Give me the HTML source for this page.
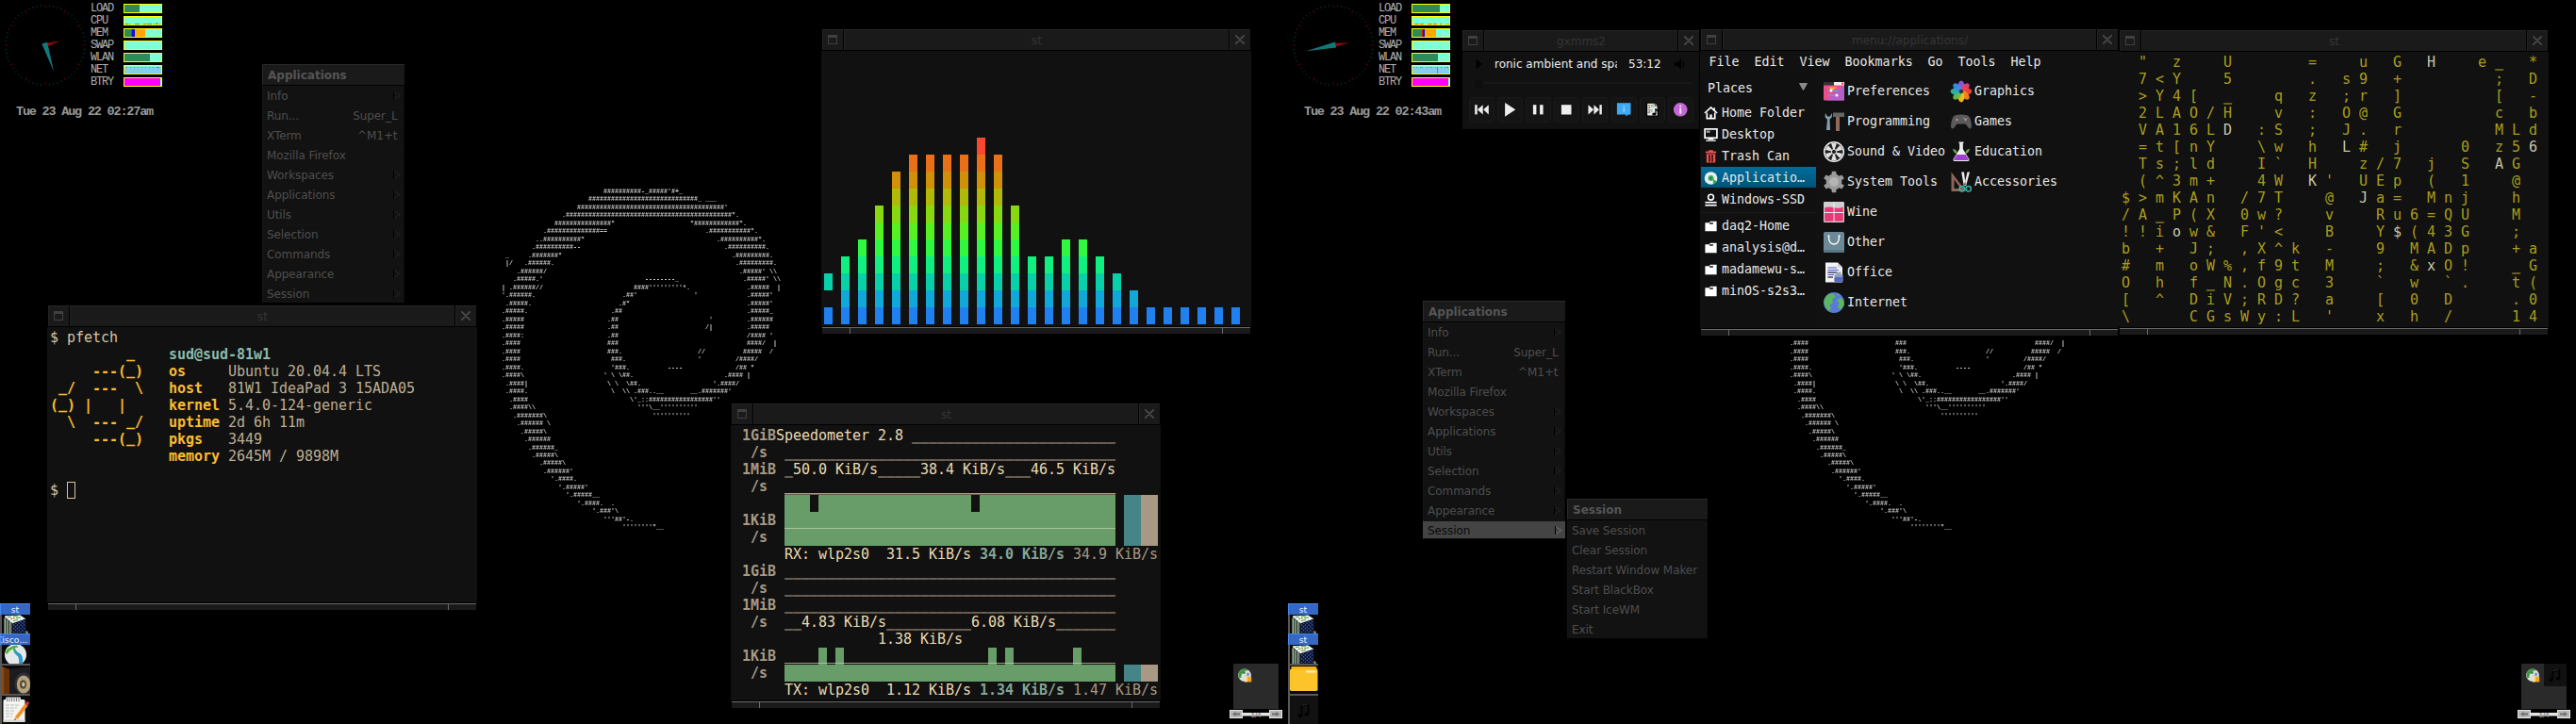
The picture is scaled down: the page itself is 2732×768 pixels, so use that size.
<!DOCTYPE html>
<html><head><meta charset="utf-8"><title>desktop</title>
<style>
html,body{margin:0;padding:0;background:#000;}
body{width:2732px;height:768px;position:relative;overflow:hidden;font-family:"DejaVu Sans","Liberation Sans",sans-serif;}
*{box-sizing:border-box;}
.abs{position:absolute;}
pre{margin:0;}
.art{position:absolute;font-family:"Liberation Mono","DejaVu Sans Mono",monospace;font-size:26.664px;line-height:33.96px;color:#cccccc;letter-spacing:0px;white-space:pre;font-weight:bold;transform:scale(0.25);transform-origin:0 0;filter:blur(0.3px);}
.lbl{position:absolute;font-family:"Liberation Mono",monospace;font-size:12px;letter-spacing:-1.2px;color:#b0b0b0;line-height:12px;white-space:pre;}
.date{position:absolute;font-family:"Liberation Mono",monospace;font-weight:bold;font-size:13.5px;letter-spacing:-1.2px;color:#999;line-height:14px;white-space:pre;}
.bar{position:absolute;width:41px;height:10px;border:1px solid #ffff00;background:#7fffd4;overflow:hidden;}
.bar i{position:absolute;top:0;height:8px;display:block;}
.menu{position:absolute;width:150px;font-size:12px;}
.menu .mt{height:22px;background:#1a1a1a;border-top:1px solid #2a2a2a;border-left:1px solid #2a2a2a;color:#555;font-weight:bold;padding:0 0 0 5px;line-height:22px;}
.menu .mi{height:21px;background:#121212;border-top:1px solid #131313;border-left:1px solid #161616;border-right:1px solid #0b0b0b;letter-spacing:-0.08px;color:#4e4e4e;line-height:20px;padding-left:4px;position:relative;white-space:nowrap;}
.menu .mi.sel{background:#444;color:#0a0a0a;border-top:1px solid #121212;border-left:1px solid #444;border-bottom:2px solid #0a0a0a;border-right:none;line-height:20px;}
.menu .mi:last-child{height:20px;}
.menu .mi.sel:last-child{height:20px;border-bottom-width:1px;}
.menu .mi span{position:absolute;right:6px;top:0px;}
.menu .mi svg{position:absolute;right:2.5px;top:4.7px;}
.menu .gap{height:1px;background:#000;}
.win{position:absolute;}
.tb{position:absolute;left:0;top:0;height:22px;width:100%;}
.tb div{position:absolute;top:0;height:22px;background:#1a1a1a;border-top:1px solid #272727;border-left:1px solid #232323;}
.tb .t{left:23px;right:23px;text-align:center;color:#353535;font-size:12px;line-height:23px;}
.tb .l{left:0;width:22px;}
.tb .r{right:0;width:22px;}
.tb svg{position:absolute;left:5px;top:5px;}
.ct{position:absolute;left:-1px;top:23px;background:#111;overflow:hidden;}
.rz{position:absolute;left:0;height:7px;background:#1a1a1a;border-top:1px solid #6a6a6a;}
.rz i{position:absolute;top:0;width:1px;height:6px;background:#6a6a6a;}
.term{position:absolute;left:2px;top:2.1px;font-family:"DejaVu Sans Mono","Liberation Mono",monospace;font-size:15px;line-height:18px;letter-spacing:-0.0308px;white-space:pre;color:#d5c4a1;}
.term b{font-weight:bold;}
.v{color:#bdae93}
.term u{text-decoration:none;position:relative;top:-0.4px;text-shadow:0 -0.7px 0 currentColor;}
.term b u{text-shadow:none;top:-0.8px;}
.cell{position:absolute;}
.fm{font-family:"DejaVu Sans Mono","Liberation Mono",monospace;font-size:13.3px;color:#e8e8e8;white-space:pre;}
.fm .x{position:absolute;line-height:16px;}
.tile{position:absolute;width:32px;height:32px;background:#0c0c0c;overflow:hidden;}
.tl{position:absolute;left:0;top:0;width:32px;height:12px;background:#3468c4;border-top:1px solid #4488ee;border-left:1px solid #4488ee;color:#eef2fc;font-size:9.4px;line-height:12px;white-space:nowrap;overflow:hidden;}
.tl span{position:absolute;left:-15px;width:60px;text-align:center;top:-0.3px;}
</style></head>
<body>
<pre class="art" style="left:527.80px;top:199.16px">                            ##########-_#####&#x27;#+_
                        #############################_ ___
                     #######################################&#x27;
                 .############################################&quot;.
               ###############&quot;                    &quot;############&quot;.
            .##############==                          .###########&quot;.
          ..##########&quot;                                   .##########&quot;.
         .##########--                                      .##########.
  _     .#######&quot;                                             .#########.
  |/   .######.                                                .#########.
     .######/                                                   .#####&#x27; \\
    .#####.&#x27;                           --------_                 .#####&#x27; \\
 | .######//                        ####&#x27;&#x27;&#x27;&#x27;&#x27;&#x27;&#x27;&#x27;&#x27;*.               .#####  |
 &#x27;.######.                       .##&#x27;               &#x27;             .#####&#x27;
  .#####.                       .#&quot;                               .#####&#x27;
 .#####.                      .##                                 .#####_
 .#####                      .##                        &#x27;         .######
 .#####                      .##                       /|         .#####
 .####:                      .##                                  /#### &#x27;
 .####                       ###                                  ####/  |
 .####                       ###.                    //          #####  /
 .####                        ###.                   &#x27;         /####/
 .####.                       &#x27;###.          ----              /## &quot;
 .####\                     &#x27; \ \##.                        .#### |
  .####|                     \ \  \##.                   &#x27;.####/
  .####.                      \  \\ .###..__       __.#######&#x27;
   .####                           \&#x27;_::#################&#x27;&#x27;
   .####\\                           &#x27;&#x27;&#x27;\__&#x27;&#x27;&#x27;&#x27;&#x27;&#x27;&#x27;&#x27;&#x27;&#x27;
    .#######\                            &#x27;&#x27;&#x27;&#x27;&#x27;&#x27;&#x27;&#x27;&#x27;&#x27;
     .###### \
      .#####\
       .######
        .######_
         .#####\
           .#####\
            .######&#x27;
              &#x27;.####.
                &#x27;.#####&#x27;
                  &#x27;.#####__
                     &#x27;.####.  .
                         &#x27;.###&#x27;\
                            &#x27;&#x27;&#x27;##&#x27;-.
                                 &#x27;&#x27;&#x27;&#x27;&#x27;&#x27;&#x27;&#x27;&quot;__</pre>
<pre class="art" style="left:1893.80px;top:199.16px"> 
 
 
 
 
 
 
 
 
 
 
 
 
 
 
 
 
 
 
 .####                       ###                                  ####/  |
 .####                       ###.                    //          #####  /
 .####                        ###.                   &#x27;         /####/
 .####.                       &#x27;###.          ----              /## &quot;
 .####\                     &#x27; \ \##.                        .#### |
  .####|                     \ \  \##.                   &#x27;.####/
  .####.                      \  \\ .###..__       __.#######&#x27;
   .####                           \&#x27;_::#################&#x27;&#x27;
   .####\\                           &#x27;&#x27;&#x27;\__&#x27;&#x27;&#x27;&#x27;&#x27;&#x27;&#x27;&#x27;&#x27;&#x27;
    .#######\                            &#x27;&#x27;&#x27;&#x27;&#x27;&#x27;&#x27;&#x27;&#x27;&#x27;
     .###### \
      .#####\
       .######
        .######_
         .#####\
           .#####\
            .######&#x27;
              &#x27;.####.
                &#x27;.#####&#x27;
                  &#x27;.#####__
                     &#x27;.####.  .
                         &#x27;.###&#x27;\
                            &#x27;&#x27;&#x27;##&#x27;-.
                                 &#x27;&#x27;&#x27;&#x27;&#x27;&#x27;&#x27;&#x27;&quot;__</pre>
<svg class="abs" style="left:0px;top:0" width="96" height="96" viewBox="0 0 96 96"><line x1="48.00" y1="8.80" x2="48.00" y2="5.00" stroke="#500000" stroke-width="1.1"/><line x1="52.29" y1="7.22" x2="52.49" y2="5.24" stroke="#003333" stroke-width="1.0"/><line x1="56.52" y1="7.90" x2="56.94" y2="5.94" stroke="#003333" stroke-width="1.0"/><line x1="60.67" y1="9.01" x2="61.29" y2="7.10" stroke="#003333" stroke-width="1.0"/><line x1="64.68" y1="10.54" x2="65.49" y2="8.72" stroke="#003333" stroke-width="1.0"/><line x1="67.60" y1="14.05" x2="69.50" y2="10.76" stroke="#500000" stroke-width="1.1"/><line x1="72.10" y1="14.83" x2="73.27" y2="13.21" stroke="#003333" stroke-width="1.0"/><line x1="75.43" y1="17.53" x2="76.77" y2="16.04" stroke="#003333" stroke-width="1.0"/><line x1="78.47" y1="20.57" x2="79.96" y2="19.23" stroke="#003333" stroke-width="1.0"/><line x1="81.17" y1="23.90" x2="82.79" y2="22.73" stroke="#003333" stroke-width="1.0"/><line x1="81.95" y1="28.40" x2="85.24" y2="26.50" stroke="#500000" stroke-width="1.1"/><line x1="85.46" y1="31.32" x2="87.28" y2="30.51" stroke="#003333" stroke-width="1.0"/><line x1="86.99" y1="35.33" x2="88.90" y2="34.71" stroke="#003333" stroke-width="1.0"/><line x1="88.10" y1="39.48" x2="90.06" y2="39.06" stroke="#003333" stroke-width="1.0"/><line x1="88.78" y1="43.71" x2="90.76" y2="43.51" stroke="#003333" stroke-width="1.0"/><line x1="87.20" y1="48.00" x2="91.00" y2="48.00" stroke="#500000" stroke-width="1.1"/><line x1="88.78" y1="52.29" x2="90.76" y2="52.49" stroke="#003333" stroke-width="1.0"/><line x1="88.10" y1="56.52" x2="90.06" y2="56.94" stroke="#003333" stroke-width="1.0"/><line x1="86.99" y1="60.67" x2="88.90" y2="61.29" stroke="#003333" stroke-width="1.0"/><line x1="85.46" y1="64.68" x2="87.28" y2="65.49" stroke="#003333" stroke-width="1.0"/><line x1="81.95" y1="67.60" x2="85.24" y2="69.50" stroke="#500000" stroke-width="1.1"/><line x1="81.17" y1="72.10" x2="82.79" y2="73.27" stroke="#003333" stroke-width="1.0"/><line x1="78.47" y1="75.43" x2="79.96" y2="76.77" stroke="#003333" stroke-width="1.0"/><line x1="75.43" y1="78.47" x2="76.77" y2="79.96" stroke="#003333" stroke-width="1.0"/><line x1="72.10" y1="81.17" x2="73.27" y2="82.79" stroke="#003333" stroke-width="1.0"/><line x1="67.60" y1="81.95" x2="69.50" y2="85.24" stroke="#500000" stroke-width="1.1"/><line x1="64.68" y1="85.46" x2="65.49" y2="87.28" stroke="#003333" stroke-width="1.0"/><line x1="60.67" y1="86.99" x2="61.29" y2="88.90" stroke="#003333" stroke-width="1.0"/><line x1="56.52" y1="88.10" x2="56.94" y2="90.06" stroke="#003333" stroke-width="1.0"/><line x1="52.29" y1="88.78" x2="52.49" y2="90.76" stroke="#003333" stroke-width="1.0"/><line x1="48.00" y1="87.20" x2="48.00" y2="91.00" stroke="#500000" stroke-width="1.1"/><line x1="43.71" y1="88.78" x2="43.51" y2="90.76" stroke="#003333" stroke-width="1.0"/><line x1="39.48" y1="88.10" x2="39.06" y2="90.06" stroke="#003333" stroke-width="1.0"/><line x1="35.33" y1="86.99" x2="34.71" y2="88.90" stroke="#003333" stroke-width="1.0"/><line x1="31.32" y1="85.46" x2="30.51" y2="87.28" stroke="#003333" stroke-width="1.0"/><line x1="28.40" y1="81.95" x2="26.50" y2="85.24" stroke="#500000" stroke-width="1.1"/><line x1="23.90" y1="81.17" x2="22.73" y2="82.79" stroke="#003333" stroke-width="1.0"/><line x1="20.57" y1="78.47" x2="19.23" y2="79.96" stroke="#003333" stroke-width="1.0"/><line x1="17.53" y1="75.43" x2="16.04" y2="76.77" stroke="#003333" stroke-width="1.0"/><line x1="14.83" y1="72.10" x2="13.21" y2="73.27" stroke="#003333" stroke-width="1.0"/><line x1="14.05" y1="67.60" x2="10.76" y2="69.50" stroke="#500000" stroke-width="1.1"/><line x1="10.54" y1="64.68" x2="8.72" y2="65.49" stroke="#003333" stroke-width="1.0"/><line x1="9.01" y1="60.67" x2="7.10" y2="61.29" stroke="#003333" stroke-width="1.0"/><line x1="7.90" y1="56.52" x2="5.94" y2="56.94" stroke="#003333" stroke-width="1.0"/><line x1="7.22" y1="52.29" x2="5.24" y2="52.49" stroke="#003333" stroke-width="1.0"/><line x1="8.80" y1="48.00" x2="5.00" y2="48.00" stroke="#500000" stroke-width="1.1"/><line x1="7.22" y1="43.71" x2="5.24" y2="43.51" stroke="#003333" stroke-width="1.0"/><line x1="7.90" y1="39.48" x2="5.94" y2="39.06" stroke="#003333" stroke-width="1.0"/><line x1="9.01" y1="35.33" x2="7.10" y2="34.71" stroke="#003333" stroke-width="1.0"/><line x1="10.54" y1="31.32" x2="8.72" y2="30.51" stroke="#003333" stroke-width="1.0"/><line x1="14.05" y1="28.40" x2="10.76" y2="26.50" stroke="#500000" stroke-width="1.1"/><line x1="14.83" y1="23.90" x2="13.21" y2="22.73" stroke="#003333" stroke-width="1.0"/><line x1="17.53" y1="20.57" x2="16.04" y2="19.23" stroke="#003333" stroke-width="1.0"/><line x1="20.57" y1="17.53" x2="19.23" y2="16.04" stroke="#003333" stroke-width="1.0"/><line x1="23.90" y1="14.83" x2="22.73" y2="13.21" stroke="#003333" stroke-width="1.0"/><line x1="28.40" y1="14.05" x2="26.50" y2="10.76" stroke="#500000" stroke-width="1.1"/><line x1="31.32" y1="10.54" x2="30.51" y2="8.72" stroke="#003333" stroke-width="1.0"/><line x1="35.33" y1="9.01" x2="34.71" y2="7.10" stroke="#003333" stroke-width="1.0"/><line x1="39.48" y1="7.90" x2="39.06" y2="5.94" stroke="#003333" stroke-width="1.0"/><line x1="43.71" y1="7.22" x2="43.51" y2="5.24" stroke="#003333" stroke-width="1.0"/><polygon points="46.79,50.97 64.30,43.17 45.37,46.17" fill="#8b0a0a"/><polygon points="44.37,46.55 57.12,76.06 50.08,44.70" fill="#11797c"/></svg>
<div class="lbl" style="left:96px;top:3.2px">LOAD</div><div class="bar" style="left:131px;top:4px"><i style="left:0px;width:16px;background:#2e8b57;"></i></div>
<div class="lbl" style="left:96px;top:16.2px">CPU</div><div class="bar" style="left:131px;top:17px"><i style="left:1px;width:1px;background:#3c9a5a;top:7px;height:1px"></i><i style="left:2px;width:1px;background:#3c9a5a;top:7px;height:1px"></i><i style="left:5px;width:1px;background:#3c9a5a;top:7px;height:1px"></i><i style="left:11px;width:1px;background:#3c9a5a;top:7px;height:1px"></i><i style="left:12px;width:1px;background:#3c9a5a;top:7px;height:1px"></i><i style="left:14px;width:1px;background:#3c9a5a;top:7px;height:1px"></i><i style="left:15px;width:1px;background:#3c9a5a;top:7px;height:1px"></i><i style="left:20px;width:1px;background:#3c9a5a;top:7px;height:1px"></i><i style="left:22px;width:1px;background:#3c9a5a;top:7px;height:1px"></i><i style="left:24px;width:1px;background:#3c9a5a;top:7px;height:1px"></i><i style="left:25px;width:1px;background:#3c9a5a;top:7px;height:1px"></i><i style="left:27px;width:1px;background:#3c9a5a;top:7px;height:1px"></i><i style="left:28px;width:1px;background:#3c9a5a;top:7px;height:1px"></i><i style="left:31px;width:1px;background:#3c9a5a;top:7px;height:1px"></i><i style="left:34px;width:1px;background:#3c9a5a;top:7px;height:1px"></i><i style="left:37px;width:1px;background:#3c9a5a;top:7px;height:1px"></i><i style="left:3px;width:1px;background:#d08a20;top:7px;height:1px"></i><i style="left:13px;width:1px;background:#d08a20;top:7px;height:1px"></i><i style="left:21px;width:1px;background:#d08a20;top:7px;height:1px"></i><i style="left:26px;width:1px;background:#d08a20;top:7px;height:1px"></i><i style="left:33px;width:1px;background:#d08a20;top:7px;height:1px"></i><i style="left:34px;width:1px;background:#2e8b57;top:6px;height:2px"></i></div>
<div class="lbl" style="left:96px;top:29.2px">MEM</div><div class="bar" style="left:131px;top:30px"><i style="left:0px;width:7px;background:#2e8b57;"></i><i style="left:7px;width:1px;background:#ee1111;"></i><i style="left:8px;width:2.5px;background:#0a0aee;"></i><i style="left:10.5px;width:11px;background:#ffa500;"></i></div>
<div class="lbl" style="left:96px;top:42.2px">SWAP</div><div class="bar" style="left:131px;top:43px"></div>
<div class="lbl" style="left:96px;top:55.2px">WLAN</div><div class="bar" style="left:131px;top:56px"><i style="left:0px;width:27px;background:#2e8b57;"></i></div>
<div class="lbl" style="left:96px;top:68.2px">NET</div><div class="bar" style="left:131px;top:69px"><i style="left:0px;width:39px;background:#87ceeb;top:1px;height:7px"></i><i style="left:2px;width:1px;background:#7b68ee;top:1px;height:1px"></i><i style="left:6px;width:1px;background:#7b68ee;top:1px;height:1px"></i><i style="left:10px;width:1px;background:#7b68ee;top:1px;height:1px"></i><i style="left:14px;width:1px;background:#7b68ee;top:1px;height:1px"></i><i style="left:18px;width:1px;background:#7b68ee;top:1px;height:1px"></i><i style="left:22px;width:1px;background:#7b68ee;top:1px;height:1px"></i><i style="left:26px;width:1px;background:#7b68ee;top:1px;height:1px"></i><i style="left:30px;width:1px;background:#7b68ee;top:1px;height:1px"></i><i style="left:34px;width:1px;background:#7b68ee;top:1px;height:1px"></i><i style="left:35px;width:1px;background:#7b68ee;top:1px;height:1px"></i><i style="left:36px;width:1px;background:#7b68ee;top:1px;height:1px"></i></div>
<div class="lbl" style="left:96px;top:81.2px">BTRY</div><div class="bar" style="left:131px;top:82px"><i style="left:0px;width:38px;background:#ff00ff;"></i></div>
<div class="date" style="left:17px;top:112px">Tue 23 Aug 22 02:27am</div>
<svg class="abs" style="left:1366px;top:0" width="96" height="96" viewBox="0 0 96 96"><line x1="48.00" y1="8.80" x2="48.00" y2="5.00" stroke="#500000" stroke-width="1.1"/><line x1="52.29" y1="7.22" x2="52.49" y2="5.24" stroke="#003333" stroke-width="1.0"/><line x1="56.52" y1="7.90" x2="56.94" y2="5.94" stroke="#003333" stroke-width="1.0"/><line x1="60.67" y1="9.01" x2="61.29" y2="7.10" stroke="#003333" stroke-width="1.0"/><line x1="64.68" y1="10.54" x2="65.49" y2="8.72" stroke="#003333" stroke-width="1.0"/><line x1="67.60" y1="14.05" x2="69.50" y2="10.76" stroke="#500000" stroke-width="1.1"/><line x1="72.10" y1="14.83" x2="73.27" y2="13.21" stroke="#003333" stroke-width="1.0"/><line x1="75.43" y1="17.53" x2="76.77" y2="16.04" stroke="#003333" stroke-width="1.0"/><line x1="78.47" y1="20.57" x2="79.96" y2="19.23" stroke="#003333" stroke-width="1.0"/><line x1="81.17" y1="23.90" x2="82.79" y2="22.73" stroke="#003333" stroke-width="1.0"/><line x1="81.95" y1="28.40" x2="85.24" y2="26.50" stroke="#500000" stroke-width="1.1"/><line x1="85.46" y1="31.32" x2="87.28" y2="30.51" stroke="#003333" stroke-width="1.0"/><line x1="86.99" y1="35.33" x2="88.90" y2="34.71" stroke="#003333" stroke-width="1.0"/><line x1="88.10" y1="39.48" x2="90.06" y2="39.06" stroke="#003333" stroke-width="1.0"/><line x1="88.78" y1="43.71" x2="90.76" y2="43.51" stroke="#003333" stroke-width="1.0"/><line x1="87.20" y1="48.00" x2="91.00" y2="48.00" stroke="#500000" stroke-width="1.1"/><line x1="88.78" y1="52.29" x2="90.76" y2="52.49" stroke="#003333" stroke-width="1.0"/><line x1="88.10" y1="56.52" x2="90.06" y2="56.94" stroke="#003333" stroke-width="1.0"/><line x1="86.99" y1="60.67" x2="88.90" y2="61.29" stroke="#003333" stroke-width="1.0"/><line x1="85.46" y1="64.68" x2="87.28" y2="65.49" stroke="#003333" stroke-width="1.0"/><line x1="81.95" y1="67.60" x2="85.24" y2="69.50" stroke="#500000" stroke-width="1.1"/><line x1="81.17" y1="72.10" x2="82.79" y2="73.27" stroke="#003333" stroke-width="1.0"/><line x1="78.47" y1="75.43" x2="79.96" y2="76.77" stroke="#003333" stroke-width="1.0"/><line x1="75.43" y1="78.47" x2="76.77" y2="79.96" stroke="#003333" stroke-width="1.0"/><line x1="72.10" y1="81.17" x2="73.27" y2="82.79" stroke="#003333" stroke-width="1.0"/><line x1="67.60" y1="81.95" x2="69.50" y2="85.24" stroke="#500000" stroke-width="1.1"/><line x1="64.68" y1="85.46" x2="65.49" y2="87.28" stroke="#003333" stroke-width="1.0"/><line x1="60.67" y1="86.99" x2="61.29" y2="88.90" stroke="#003333" stroke-width="1.0"/><line x1="56.52" y1="88.10" x2="56.94" y2="90.06" stroke="#003333" stroke-width="1.0"/><line x1="52.29" y1="88.78" x2="52.49" y2="90.76" stroke="#003333" stroke-width="1.0"/><line x1="48.00" y1="87.20" x2="48.00" y2="91.00" stroke="#500000" stroke-width="1.1"/><line x1="43.71" y1="88.78" x2="43.51" y2="90.76" stroke="#003333" stroke-width="1.0"/><line x1="39.48" y1="88.10" x2="39.06" y2="90.06" stroke="#003333" stroke-width="1.0"/><line x1="35.33" y1="86.99" x2="34.71" y2="88.90" stroke="#003333" stroke-width="1.0"/><line x1="31.32" y1="85.46" x2="30.51" y2="87.28" stroke="#003333" stroke-width="1.0"/><line x1="28.40" y1="81.95" x2="26.50" y2="85.24" stroke="#500000" stroke-width="1.1"/><line x1="23.90" y1="81.17" x2="22.73" y2="82.79" stroke="#003333" stroke-width="1.0"/><line x1="20.57" y1="78.47" x2="19.23" y2="79.96" stroke="#003333" stroke-width="1.0"/><line x1="17.53" y1="75.43" x2="16.04" y2="76.77" stroke="#003333" stroke-width="1.0"/><line x1="14.83" y1="72.10" x2="13.21" y2="73.27" stroke="#003333" stroke-width="1.0"/><line x1="14.05" y1="67.60" x2="10.76" y2="69.50" stroke="#500000" stroke-width="1.1"/><line x1="10.54" y1="64.68" x2="8.72" y2="65.49" stroke="#003333" stroke-width="1.0"/><line x1="9.01" y1="60.67" x2="7.10" y2="61.29" stroke="#003333" stroke-width="1.0"/><line x1="7.90" y1="56.52" x2="5.94" y2="56.94" stroke="#003333" stroke-width="1.0"/><line x1="7.22" y1="52.29" x2="5.24" y2="52.49" stroke="#003333" stroke-width="1.0"/><line x1="8.80" y1="48.00" x2="5.00" y2="48.00" stroke="#500000" stroke-width="1.1"/><line x1="7.22" y1="43.71" x2="5.24" y2="43.51" stroke="#003333" stroke-width="1.0"/><line x1="7.90" y1="39.48" x2="5.94" y2="39.06" stroke="#003333" stroke-width="1.0"/><line x1="9.01" y1="35.33" x2="7.10" y2="34.71" stroke="#003333" stroke-width="1.0"/><line x1="10.54" y1="31.32" x2="8.72" y2="30.51" stroke="#003333" stroke-width="1.0"/><line x1="14.05" y1="28.40" x2="10.76" y2="26.50" stroke="#500000" stroke-width="1.1"/><line x1="14.83" y1="23.90" x2="13.21" y2="22.73" stroke="#003333" stroke-width="1.0"/><line x1="17.53" y1="20.57" x2="16.04" y2="19.23" stroke="#003333" stroke-width="1.0"/><line x1="20.57" y1="17.53" x2="19.23" y2="16.04" stroke="#003333" stroke-width="1.0"/><line x1="23.90" y1="14.83" x2="22.73" y2="13.21" stroke="#003333" stroke-width="1.0"/><line x1="28.40" y1="14.05" x2="26.50" y2="10.76" stroke="#500000" stroke-width="1.1"/><line x1="31.32" y1="10.54" x2="30.51" y2="8.72" stroke="#003333" stroke-width="1.0"/><line x1="35.33" y1="9.01" x2="34.71" y2="7.10" stroke="#003333" stroke-width="1.0"/><line x1="39.48" y1="7.90" x2="39.06" y2="5.94" stroke="#003333" stroke-width="1.0"/><line x1="43.71" y1="7.22" x2="43.51" y2="5.24" stroke="#003333" stroke-width="1.0"/><polygon points="46.39,50.77 64.81,45.49 45.65,45.82" fill="#8b0a0a"/><polygon points="49.82,44.55 19.14,54.13 51.07,50.41" fill="#11797c"/></svg>
<div class="lbl" style="left:1462px;top:3.2px">LOAD</div><div class="bar" style="left:1497px;top:4px"><i style="left:0px;width:29px;background:#2e8b57;"></i></div>
<div class="lbl" style="left:1462px;top:16.2px">CPU</div><div class="bar" style="left:1497px;top:17px"><i style="left:2px;width:1px;background:#d08a20;top:7px;height:1px"></i><i style="left:3px;width:1px;background:#d08a20;top:7px;height:1px"></i><i style="left:5px;width:1px;background:#d08a20;top:7px;height:1px"></i><i style="left:6px;width:1px;background:#d08a20;top:7px;height:1px"></i><i style="left:8px;width:1px;background:#d08a20;top:7px;height:1px"></i><i style="left:10px;width:1px;background:#d08a20;top:7px;height:1px"></i><i style="left:11px;width:1px;background:#d08a20;top:7px;height:1px"></i><i style="left:16px;width:1px;background:#d08a20;top:7px;height:1px"></i><i style="left:17px;width:1px;background:#d08a20;top:7px;height:1px"></i><i style="left:19px;width:1px;background:#d08a20;top:7px;height:1px"></i><i style="left:20px;width:1px;background:#d08a20;top:7px;height:1px"></i><i style="left:22px;width:1px;background:#d08a20;top:7px;height:1px"></i><i style="left:23px;width:1px;background:#d08a20;top:7px;height:1px"></i><i style="left:25px;width:1px;background:#d08a20;top:7px;height:1px"></i><i style="left:29px;width:1px;background:#d08a20;top:7px;height:1px"></i><i style="left:35px;width:1px;background:#d08a20;top:7px;height:1px"></i><i style="left:37px;width:1px;background:#d08a20;top:7px;height:1px"></i><i style="left:38px;width:1px;background:#d08a20;top:7px;height:1px"></i><i style="left:4px;width:1px;background:#3c9a5a;top:7px;height:1px"></i><i style="left:9px;width:1px;background:#3c9a5a;top:7px;height:1px"></i><i style="left:18px;width:1px;background:#3c9a5a;top:7px;height:1px"></i><i style="left:24px;width:1px;background:#3c9a5a;top:7px;height:1px"></i><i style="left:30px;width:1px;background:#3c9a5a;top:7px;height:1px"></i></div>
<div class="lbl" style="left:1462px;top:29.2px">MEM</div><div class="bar" style="left:1497px;top:30px"><i style="left:0px;width:10px;background:#2e8b57;"></i><i style="left:10px;width:1px;background:#ee1111;"></i><i style="left:11px;width:2px;background:#0a0aee;"></i><i style="left:13px;width:12px;background:#ffa500;"></i></div>
<div class="lbl" style="left:1462px;top:42.2px">SWAP</div><div class="bar" style="left:1497px;top:43px"></div>
<div class="lbl" style="left:1462px;top:55.2px">WLAN</div><div class="bar" style="left:1497px;top:56px"><i style="left:0px;width:26.5px;background:#2e8b57;"></i></div>
<div class="lbl" style="left:1462px;top:68.2px">NET</div><div class="bar" style="left:1497px;top:69px"><i style="left:0px;width:39px;background:#87ceeb;top:1px;height:7px"></i><i style="left:1px;width:1px;background:#7b68ee;top:1px;height:1px"></i><i style="left:4px;width:1px;background:#7b68ee;top:1px;height:1px"></i><i style="left:8px;width:1px;background:#7b68ee;top:1px;height:1px"></i><i style="left:10px;width:1px;background:#7b68ee;top:1px;height:1px"></i><i style="left:15px;width:1px;background:#7b68ee;top:1px;height:1px"></i><i style="left:18px;width:1px;background:#7b68ee;top:1px;height:1px"></i><i style="left:20px;width:1px;background:#7b68ee;top:1px;height:1px"></i><i style="left:24px;width:1px;background:#7b68ee;top:1px;height:1px"></i><i style="left:30px;width:1px;background:#7b68ee;top:1px;height:1px"></i><i style="left:34px;width:1px;background:#7b68ee;top:1px;height:1px"></i><i style="left:36px;width:1px;background:#7b68ee;top:1px;height:1px"></i><i style="left:37px;width:1px;background:#7b68ee;top:1px;height:1px"></i><i style="left:26px;width:1px;background:#7b68ee;top:1px;height:7px"></i></div>
<div class="lbl" style="left:1462px;top:81.2px">BTRY</div><div class="bar" style="left:1497px;top:82px"><i style="left:0px;width:38px;background:#ff00ff;"></i></div>
<div class="date" style="left:1383px;top:112px">Tue 23 Aug 22 02:43am</div>
<div class="menu" style="left:278px;top:68px;width:150.5px"><div class="mt">Applications</div><div class="gap"></div><div class="mi">Info<svg width="8" height="9" viewBox="0 0 8 9"><path d="M0.5 0.5 L7.3 4.5 L0.5 8.5" fill="none" stroke="#242424" stroke-width="1"/><path d="M0.5 0 V9" stroke="#000" stroke-width="1"/></svg></div><div class="mi">Run...<span>Super_L</span></div><div class="mi">XTerm<span>^M1+t</span></div><div class="mi">Mozilla Firefox</div><div class="mi">Workspaces<svg width="8" height="9" viewBox="0 0 8 9"><path d="M0.5 0.5 L7.3 4.5 L0.5 8.5" fill="none" stroke="#242424" stroke-width="1"/><path d="M0.5 0 V9" stroke="#000" stroke-width="1"/></svg></div><div class="mi">Applications<svg width="8" height="9" viewBox="0 0 8 9"><path d="M0.5 0.5 L7.3 4.5 L0.5 8.5" fill="none" stroke="#242424" stroke-width="1"/><path d="M0.5 0 V9" stroke="#000" stroke-width="1"/></svg></div><div class="mi">Utils<svg width="8" height="9" viewBox="0 0 8 9"><path d="M0.5 0.5 L7.3 4.5 L0.5 8.5" fill="none" stroke="#242424" stroke-width="1"/><path d="M0.5 0 V9" stroke="#000" stroke-width="1"/></svg></div><div class="mi">Selection<svg width="8" height="9" viewBox="0 0 8 9"><path d="M0.5 0.5 L7.3 4.5 L0.5 8.5" fill="none" stroke="#242424" stroke-width="1"/><path d="M0.5 0 V9" stroke="#000" stroke-width="1"/></svg></div><div class="mi">Commands<svg width="8" height="9" viewBox="0 0 8 9"><path d="M0.5 0.5 L7.3 4.5 L0.5 8.5" fill="none" stroke="#242424" stroke-width="1"/><path d="M0.5 0 V9" stroke="#000" stroke-width="1"/></svg></div><div class="mi">Appearance<svg width="8" height="9" viewBox="0 0 8 9"><path d="M0.5 0.5 L7.3 4.5 L0.5 8.5" fill="none" stroke="#242424" stroke-width="1"/><path d="M0.5 0 V9" stroke="#000" stroke-width="1"/></svg></div><div class="mi">Session<svg width="8" height="9" viewBox="0 0 8 9"><path d="M0.5 0.5 L7.3 4.5 L0.5 8.5" fill="none" stroke="#242424" stroke-width="1"/><path d="M0.5 0 V9" stroke="#000" stroke-width="1"/></svg></div></div>
<div class="menu" style="left:1509px;top:319px;width:150.5px"><div class="mt">Applications</div><div class="gap"></div><div class="mi">Info<svg width="8" height="9" viewBox="0 0 8 9"><path d="M0.5 0.5 L7.3 4.5 L0.5 8.5" fill="none" stroke="#242424" stroke-width="1"/><path d="M0.5 0 V9" stroke="#000" stroke-width="1"/></svg></div><div class="mi">Run...<span>Super_L</span></div><div class="mi">XTerm<span>^M1+t</span></div><div class="mi">Mozilla Firefox</div><div class="mi">Workspaces<svg width="8" height="9" viewBox="0 0 8 9"><path d="M0.5 0.5 L7.3 4.5 L0.5 8.5" fill="none" stroke="#242424" stroke-width="1"/><path d="M0.5 0 V9" stroke="#000" stroke-width="1"/></svg></div><div class="mi">Applications<svg width="8" height="9" viewBox="0 0 8 9"><path d="M0.5 0.5 L7.3 4.5 L0.5 8.5" fill="none" stroke="#242424" stroke-width="1"/><path d="M0.5 0 V9" stroke="#000" stroke-width="1"/></svg></div><div class="mi">Utils<svg width="8" height="9" viewBox="0 0 8 9"><path d="M0.5 0.5 L7.3 4.5 L0.5 8.5" fill="none" stroke="#242424" stroke-width="1"/><path d="M0.5 0 V9" stroke="#000" stroke-width="1"/></svg></div><div class="mi">Selection<svg width="8" height="9" viewBox="0 0 8 9"><path d="M0.5 0.5 L7.3 4.5 L0.5 8.5" fill="none" stroke="#242424" stroke-width="1"/><path d="M0.5 0 V9" stroke="#000" stroke-width="1"/></svg></div><div class="mi">Commands<svg width="8" height="9" viewBox="0 0 8 9"><path d="M0.5 0.5 L7.3 4.5 L0.5 8.5" fill="none" stroke="#242424" stroke-width="1"/><path d="M0.5 0 V9" stroke="#000" stroke-width="1"/></svg></div><div class="mi">Appearance<svg width="8" height="9" viewBox="0 0 8 9"><path d="M0.5 0.5 L7.3 4.5 L0.5 8.5" fill="none" stroke="#242424" stroke-width="1"/><path d="M0.5 0 V9" stroke="#000" stroke-width="1"/></svg></div><div class="mi sel">Session<svg width="8" height="9" viewBox="0 0 8 9"><path d="M0.5 0.5 L7.3 4.5 L0.5 8.5" fill="none" stroke="#707070" stroke-width="1"/><path d="M0.5 0 V9" stroke="#000" stroke-width="1"/></svg></div></div>
<div class="menu" style="left:1662px;top:529px;width:149px"><div class="mt">Session</div><div class="gap"></div><div class="mi">Save Session</div><div class="mi">Clear Session</div><div class="mi">Restart Window Maker</div><div class="mi">Start BlackBox</div><div class="mi">Start IceWM</div><div class="mi">Exit</div></div>
<div class="win" style="left:51px;top:324px;width:454px;height:324px"><div class="tb"><div class="l"><svg width="10" height="10" viewBox="0 0 10 10"><rect x="0.5" y="0.5" width="9" height="9" fill="none" stroke="#404040"/><rect x="0" y="0" width="10" height="3" fill="#404040"/></svg></div><div class="t">st</div><div class="r"><svg width="10" height="10" viewBox="0 0 10 10"><path d="M0.8 0.8 L9.2 9.2 M9.2 0.8 L0.8 9.2" stroke="#484848" stroke-width="1.9" stroke-linecap="round"/></svg></div></div><div class="ct" style="width:456px;height:292px"><div class="abs" style="left:1px;top:0;width:454px;height:292px"><pre class="term">$ pfetch
<b style="color:#fabd2f">         <u>_</u></b>    <b style="color:#8cbcae">sud@sud-81w1</b>
<b style="color:#fabd2f">     ---(<u>_</u>)</b>   <b style="color:#fabd2f">os</b>     <span class="v">Ubuntu 20.04.4 LTS</span>
<b style="color:#fabd2f"> <u>_</u>/  ---  \</b>   <b style="color:#fabd2f">host</b>   <span class="v">81W1 IdeaPad 3 15ADA05</span>
<b style="color:#fabd2f">(<u>_</u>) |   |</b>     <b style="color:#fabd2f">kernel</b> <span class="v">5.4.0-124-generic</span>
<b style="color:#fabd2f">  \  --- <u>_</u>/</b>   <b style="color:#fabd2f">uptime</b> <span class="v">2d 6h 11m</span>
<b style="color:#fabd2f">     ---(<u>_</u>)</b>   <b style="color:#fabd2f">pkgs</b>   <span class="v">3449</span>
              <b style="color:#fabd2f">memory</b> <span class="v">2645M / 9898M</span>

$ </pre><div class="cell" style="left:20px;top:164px;width:9px;height:18px;border:1px solid #d5c4a1"></div></div></div><div class="rz" style="top:316px;width:454px"><i style="left:29px"></i><i style="right:29px"></i></div></div>
<div class="win" style="left:872px;top:31px;width:454px;height:324px"><div class="tb"><div class="l"><svg width="10" height="10" viewBox="0 0 10 10"><rect x="0.5" y="0.5" width="9" height="9" fill="none" stroke="#404040"/><rect x="0" y="0" width="10" height="3" fill="#404040"/></svg></div><div class="t">st</div><div class="r"><svg width="10" height="10" viewBox="0 0 10 10"><path d="M0.8 0.8 L9.2 9.2 M9.2 0.8 L0.8 9.2" stroke="#484848" stroke-width="1.9" stroke-linecap="round"/></svg></div></div><div class="ct" style="width:456px;height:292px"><div class="abs" style="left:1px;top:0;width:454px;height:292px"><div class="cell" style="left:2px;top:272px;width:9px;height:18px;background:#2080f0"></div><div class="cell" style="left:2px;top:236px;width:9px;height:18px;background:#08d0a8"></div><div class="cell" style="left:20px;top:272px;width:9px;height:18px;background:#2080f0"></div><div class="cell" style="left:20px;top:254px;width:9px;height:18px;background:#10a8d8"></div><div class="cell" style="left:20px;top:236px;width:9px;height:18px;background:#08d0a8"></div><div class="cell" style="left:20px;top:218px;width:9px;height:18px;background:#10f080"></div><div class="cell" style="left:38px;top:272px;width:9px;height:18px;background:#2080f0"></div><div class="cell" style="left:38px;top:254px;width:9px;height:18px;background:#10a8d8"></div><div class="cell" style="left:38px;top:236px;width:9px;height:18px;background:#08d0a8"></div><div class="cell" style="left:38px;top:218px;width:9px;height:18px;background:#10f080"></div><div class="cell" style="left:38px;top:200px;width:9px;height:18px;background:#30f840"></div><div class="cell" style="left:56px;top:272px;width:9px;height:18px;background:#2080f0"></div><div class="cell" style="left:56px;top:254px;width:9px;height:18px;background:#10a8d8"></div><div class="cell" style="left:56px;top:236px;width:9px;height:18px;background:#08d0a8"></div><div class="cell" style="left:56px;top:218px;width:9px;height:18px;background:#10f080"></div><div class="cell" style="left:56px;top:200px;width:9px;height:18px;background:#30f840"></div><div class="cell" style="left:56px;top:182px;width:9px;height:18px;background:#58f020"></div><div class="cell" style="left:56px;top:164px;width:9px;height:18px;background:#88d810"></div><div class="cell" style="left:74px;top:272px;width:9px;height:18px;background:#2080f0"></div><div class="cell" style="left:74px;top:254px;width:9px;height:18px;background:#10a8d8"></div><div class="cell" style="left:74px;top:236px;width:9px;height:18px;background:#08d0a8"></div><div class="cell" style="left:74px;top:218px;width:9px;height:18px;background:#10f080"></div><div class="cell" style="left:74px;top:200px;width:9px;height:18px;background:#30f840"></div><div class="cell" style="left:74px;top:182px;width:9px;height:18px;background:#58f020"></div><div class="cell" style="left:74px;top:164px;width:9px;height:18px;background:#88d810"></div><div class="cell" style="left:74px;top:146px;width:9px;height:18px;background:#b0b808"></div><div class="cell" style="left:74px;top:128px;width:9px;height:18px;background:#d09008"></div><div class="cell" style="left:92px;top:272px;width:9px;height:18px;background:#2080f0"></div><div class="cell" style="left:92px;top:254px;width:9px;height:18px;background:#10a8d8"></div><div class="cell" style="left:92px;top:236px;width:9px;height:18px;background:#08d0a8"></div><div class="cell" style="left:92px;top:218px;width:9px;height:18px;background:#10f080"></div><div class="cell" style="left:92px;top:200px;width:9px;height:18px;background:#30f840"></div><div class="cell" style="left:92px;top:182px;width:9px;height:18px;background:#58f020"></div><div class="cell" style="left:92px;top:164px;width:9px;height:18px;background:#88d810"></div><div class="cell" style="left:92px;top:146px;width:9px;height:18px;background:#b0b808"></div><div class="cell" style="left:92px;top:128px;width:9px;height:18px;background:#d09008"></div><div class="cell" style="left:92px;top:110px;width:9px;height:18px;background:#e87018"></div><div class="cell" style="left:110px;top:272px;width:9px;height:18px;background:#2080f0"></div><div class="cell" style="left:110px;top:254px;width:9px;height:18px;background:#10a8d8"></div><div class="cell" style="left:110px;top:236px;width:9px;height:18px;background:#08d0a8"></div><div class="cell" style="left:110px;top:218px;width:9px;height:18px;background:#10f080"></div><div class="cell" style="left:110px;top:200px;width:9px;height:18px;background:#30f840"></div><div class="cell" style="left:110px;top:182px;width:9px;height:18px;background:#58f020"></div><div class="cell" style="left:110px;top:164px;width:9px;height:18px;background:#88d810"></div><div class="cell" style="left:110px;top:146px;width:9px;height:18px;background:#b0b808"></div><div class="cell" style="left:110px;top:128px;width:9px;height:18px;background:#d09008"></div><div class="cell" style="left:110px;top:110px;width:9px;height:18px;background:#e87018"></div><div class="cell" style="left:128px;top:272px;width:9px;height:18px;background:#2080f0"></div><div class="cell" style="left:128px;top:254px;width:9px;height:18px;background:#10a8d8"></div><div class="cell" style="left:128px;top:236px;width:9px;height:18px;background:#08d0a8"></div><div class="cell" style="left:128px;top:218px;width:9px;height:18px;background:#10f080"></div><div class="cell" style="left:128px;top:200px;width:9px;height:18px;background:#30f840"></div><div class="cell" style="left:128px;top:182px;width:9px;height:18px;background:#58f020"></div><div class="cell" style="left:128px;top:164px;width:9px;height:18px;background:#88d810"></div><div class="cell" style="left:128px;top:146px;width:9px;height:18px;background:#b0b808"></div><div class="cell" style="left:128px;top:128px;width:9px;height:18px;background:#d09008"></div><div class="cell" style="left:128px;top:110px;width:9px;height:18px;background:#e87018"></div><div class="cell" style="left:146px;top:272px;width:9px;height:18px;background:#2080f0"></div><div class="cell" style="left:146px;top:254px;width:9px;height:18px;background:#10a8d8"></div><div class="cell" style="left:146px;top:236px;width:9px;height:18px;background:#08d0a8"></div><div class="cell" style="left:146px;top:218px;width:9px;height:18px;background:#10f080"></div><div class="cell" style="left:146px;top:200px;width:9px;height:18px;background:#30f840"></div><div class="cell" style="left:146px;top:182px;width:9px;height:18px;background:#58f020"></div><div class="cell" style="left:146px;top:164px;width:9px;height:18px;background:#88d810"></div><div class="cell" style="left:146px;top:146px;width:9px;height:18px;background:#b0b808"></div><div class="cell" style="left:146px;top:128px;width:9px;height:18px;background:#d09008"></div><div class="cell" style="left:146px;top:110px;width:9px;height:18px;background:#e87018"></div><div class="cell" style="left:164px;top:272px;width:9px;height:18px;background:#2080f0"></div><div class="cell" style="left:164px;top:254px;width:9px;height:18px;background:#10a8d8"></div><div class="cell" style="left:164px;top:236px;width:9px;height:18px;background:#08d0a8"></div><div class="cell" style="left:164px;top:218px;width:9px;height:18px;background:#10f080"></div><div class="cell" style="left:164px;top:200px;width:9px;height:18px;background:#30f840"></div><div class="cell" style="left:164px;top:182px;width:9px;height:18px;background:#58f020"></div><div class="cell" style="left:164px;top:164px;width:9px;height:18px;background:#88d810"></div><div class="cell" style="left:164px;top:146px;width:9px;height:18px;background:#b0b808"></div><div class="cell" style="left:164px;top:128px;width:9px;height:18px;background:#d09008"></div><div class="cell" style="left:164px;top:110px;width:9px;height:18px;background:#e87018"></div><div class="cell" style="left:164px;top:92px;width:9px;height:18px;background:#f84830"></div><div class="cell" style="left:182px;top:272px;width:9px;height:18px;background:#2080f0"></div><div class="cell" style="left:182px;top:254px;width:9px;height:18px;background:#10a8d8"></div><div class="cell" style="left:182px;top:236px;width:9px;height:18px;background:#08d0a8"></div><div class="cell" style="left:182px;top:218px;width:9px;height:18px;background:#10f080"></div><div class="cell" style="left:182px;top:200px;width:9px;height:18px;background:#30f840"></div><div class="cell" style="left:182px;top:182px;width:9px;height:18px;background:#58f020"></div><div class="cell" style="left:182px;top:164px;width:9px;height:18px;background:#88d810"></div><div class="cell" style="left:182px;top:146px;width:9px;height:18px;background:#b0b808"></div><div class="cell" style="left:182px;top:128px;width:9px;height:18px;background:#d09008"></div><div class="cell" style="left:182px;top:110px;width:9px;height:18px;background:#e87018"></div><div class="cell" style="left:200px;top:272px;width:9px;height:18px;background:#2080f0"></div><div class="cell" style="left:200px;top:254px;width:9px;height:18px;background:#10a8d8"></div><div class="cell" style="left:200px;top:236px;width:9px;height:18px;background:#08d0a8"></div><div class="cell" style="left:200px;top:218px;width:9px;height:18px;background:#10f080"></div><div class="cell" style="left:200px;top:200px;width:9px;height:18px;background:#30f840"></div><div class="cell" style="left:200px;top:182px;width:9px;height:18px;background:#58f020"></div><div class="cell" style="left:200px;top:164px;width:9px;height:18px;background:#88d810"></div><div class="cell" style="left:218px;top:272px;width:9px;height:18px;background:#2080f0"></div><div class="cell" style="left:218px;top:254px;width:9px;height:18px;background:#10a8d8"></div><div class="cell" style="left:218px;top:236px;width:9px;height:18px;background:#08d0a8"></div><div class="cell" style="left:218px;top:218px;width:9px;height:18px;background:#10f080"></div><div class="cell" style="left:236px;top:272px;width:9px;height:18px;background:#2080f0"></div><div class="cell" style="left:236px;top:254px;width:9px;height:18px;background:#10a8d8"></div><div class="cell" style="left:236px;top:236px;width:9px;height:18px;background:#08d0a8"></div><div class="cell" style="left:236px;top:218px;width:9px;height:18px;background:#10f080"></div><div class="cell" style="left:254px;top:272px;width:9px;height:18px;background:#2080f0"></div><div class="cell" style="left:254px;top:254px;width:9px;height:18px;background:#10a8d8"></div><div class="cell" style="left:254px;top:236px;width:9px;height:18px;background:#08d0a8"></div><div class="cell" style="left:254px;top:218px;width:9px;height:18px;background:#10f080"></div><div class="cell" style="left:254px;top:200px;width:9px;height:18px;background:#30f840"></div><div class="cell" style="left:272px;top:272px;width:9px;height:18px;background:#2080f0"></div><div class="cell" style="left:272px;top:254px;width:9px;height:18px;background:#10a8d8"></div><div class="cell" style="left:272px;top:236px;width:9px;height:18px;background:#08d0a8"></div><div class="cell" style="left:272px;top:218px;width:9px;height:18px;background:#10f080"></div><div class="cell" style="left:272px;top:200px;width:9px;height:18px;background:#30f840"></div><div class="cell" style="left:290px;top:272px;width:9px;height:18px;background:#2080f0"></div><div class="cell" style="left:290px;top:254px;width:9px;height:18px;background:#10a8d8"></div><div class="cell" style="left:290px;top:236px;width:9px;height:18px;background:#08d0a8"></div><div class="cell" style="left:290px;top:218px;width:9px;height:18px;background:#10f080"></div><div class="cell" style="left:308px;top:272px;width:9px;height:18px;background:#2080f0"></div><div class="cell" style="left:308px;top:254px;width:9px;height:18px;background:#10a8d8"></div><div class="cell" style="left:308px;top:236px;width:9px;height:18px;background:#08d0a8"></div><div class="cell" style="left:326px;top:272px;width:9px;height:18px;background:#2080f0"></div><div class="cell" style="left:326px;top:254px;width:9px;height:18px;background:#10a8d8"></div><div class="cell" style="left:344px;top:272px;width:9px;height:18px;background:#2080f0"></div><div class="cell" style="left:362px;top:272px;width:9px;height:18px;background:#2080f0"></div><div class="cell" style="left:380px;top:272px;width:9px;height:18px;background:#2080f0"></div><div class="cell" style="left:398px;top:272px;width:9px;height:18px;background:#2080f0"></div><div class="cell" style="left:416px;top:272px;width:9px;height:18px;background:#2080f0"></div><div class="cell" style="left:434px;top:272px;width:9px;height:18px;background:#2080f0"></div></div></div><div class="rz" style="top:316px;width:454px"><i style="left:29px"></i><i style="right:29px"></i></div></div>
<div class="win" style="left:776px;top:428px;width:454px;height:324px"><div class="tb"><div class="l"><svg width="10" height="10" viewBox="0 0 10 10"><rect x="0.5" y="0.5" width="9" height="9" fill="none" stroke="#404040"/><rect x="0" y="0" width="10" height="3" fill="#404040"/></svg></div><div class="t">st</div><div class="r"><svg width="10" height="10" viewBox="0 0 10 10"><path d="M0.8 0.8 L9.2 9.2 M9.2 0.8 L0.8 9.2" stroke="#484848" stroke-width="1.9" stroke-linecap="round"/></svg></div></div><div class="ct" style="width:456px;height:292px"><div class="abs" style="left:1px;top:0;width:454px;height:292px"><div class="cell" style="left:56px;top:74px;width:351px;height:54px;background:#689d6a;"></div><div class="cell" style="left:83px;top:74px;width:9px;height:18px;background:#111;"></div><div class="cell" style="left:254px;top:74px;width:9px;height:18px;background:#111;"></div><div class="cell" style="left:56px;top:109px;width:351px;height:1px;background:#a9c39a"></div><div class="cell" style="left:56px;top:72px;width:351px;height:1px;background:#a89984"></div><div class="cell" style="left:416px;top:74px;width:18px;height:54px;background:#458588;"></div><div class="cell" style="left:434px;top:74px;width:18px;height:54px;background:#a89984;"></div><div class="cell" style="left:56px;top:252px;width:351px;height:1px;background:#a89984"></div><div class="cell" style="left:92px;top:236px;width:9px;height:18px;background:#689d6a;"></div><div class="cell" style="left:92px;top:252px;width:9px;height:1px;background:#a9c39a"></div><div class="cell" style="left:110px;top:236px;width:9px;height:18px;background:#689d6a;"></div><div class="cell" style="left:110px;top:252px;width:9px;height:1px;background:#a9c39a"></div><div class="cell" style="left:272px;top:236px;width:9px;height:18px;background:#689d6a;"></div><div class="cell" style="left:272px;top:252px;width:9px;height:1px;background:#a9c39a"></div><div class="cell" style="left:290px;top:236px;width:9px;height:18px;background:#689d6a;"></div><div class="cell" style="left:290px;top:252px;width:9px;height:1px;background:#a9c39a"></div><div class="cell" style="left:362px;top:236px;width:9px;height:18px;background:#689d6a;"></div><div class="cell" style="left:362px;top:252px;width:9px;height:1px;background:#a9c39a"></div><div class="cell" style="left:56px;top:254px;width:351px;height:18px;background:#689d6a;"></div><div class="cell" style="left:416px;top:254px;width:18px;height:18px;background:#458588;"></div><div class="cell" style="left:434px;top:254px;width:18px;height:18px;background:#a89984;"></div><pre class="term"><b style="color:#a89984"> 1GiB</b><span style="color:#ebdbb2">Speedometer 2.8 </span><span style="color:#a89984"><u>________________________</u></span>
<b style="color:#a89984">  /s  </b><span style="color:#a89984"><u>_______________________________________</u></span>
<b style="color:#a89984"> 1MiB </b><span style="color:#a89984"><u>_</u></span><span style="color:#ebdbb2">50.0 KiB/s</span><span style="color:#a89984"><u>_____</u></span><span style="color:#ebdbb2">38.4 KiB/s</span><span style="color:#a89984"><u>___</u></span><span style="color:#ebdbb2">46.5 KiB/s</span>
<b style="color:#a89984">  /s  </b><span style="color:#a89984"><u>_______________________________________</u></span>

<b style="color:#a89984"> 1KiB </b>
<b style="color:#a89984">  /s  </b>
      <span style="color:#ebdbb2">RX: wlp2s0  31.5 KiB/s </span><b style="color:#83a598">34.0 KiB/s</b> <span style="color:#a89984">34.9 KiB/s</span>
<b style="color:#a89984"> 1GiB </b><span style="color:#a89984"><u>_______________________________________</u></span>
<b style="color:#a89984">  /s  </b><span style="color:#a89984"><u>_______________________________________</u></span>
<b style="color:#a89984"> 1MiB </b><span style="color:#a89984"><u>_______________________________________</u></span>
<b style="color:#a89984">  /s  </b><span style="color:#a89984"><u>__</u></span><span style="color:#ebdbb2">4.83 KiB/s</span><span style="color:#a89984"><u>__________</u></span><span style="color:#ebdbb2">6.08 KiB/s</span><span style="color:#a89984"><u>_______</u></span>
                 <span style="color:#ebdbb2">1.38 KiB/s</span>
<b style="color:#a89984"> 1KiB </b>
<b style="color:#a89984">  /s  </b>
      <span style="color:#ebdbb2">TX: wlp2s0  1.12 KiB/s </span><b style="color:#83a598">1.34 KiB/s</b> <span style="color:#a89984">1.47 KiB/s</span></pre></div></div><div class="rz" style="top:316px;width:454px"><i style="left:29px"></i><i style="right:29px"></i></div></div>
<div class="win" style="left:2248px;top:32px;width:454px;height:324px"><div class="tb"><div class="l"><svg width="10" height="10" viewBox="0 0 10 10"><rect x="0.5" y="0.5" width="9" height="9" fill="none" stroke="#404040"/><rect x="0" y="0" width="10" height="3" fill="#404040"/></svg></div><div class="t">st</div><div class="r"><svg width="10" height="10" viewBox="0 0 10 10"><path d="M0.8 0.8 L9.2 9.2 M9.2 0.8 L0.8 9.2" stroke="#484848" stroke-width="1.9" stroke-linecap="round"/></svg></div></div><div class="ct" style="width:456px;height:292px"><div class="abs" style="left:1px;top:0;width:454px;height:292px"><pre class="term" style="color:#a89c1c">  &quot;   z     U         =     u   G   <span style="color:#c8c4a8">H</span>     e <u>_</u>   *
  7 &lt; Y     5         .   s 9   +           ;   D
  &gt; Y 4 [   <u>_</u>     q   z   ; r   ]           [   -
  2 L A O / H     v   :   O @   G           c   b
  V A 1 6 L <span style="color:#c8c4a8">D</span>   : S   ;   J .   r           M L d
  = t [ n Y     \ w   h   <span style="color:#c8c4a8">L</span> #   j       0   z 5 <span style="color:#c8c4a8">6</span>
  T s ; l d     I `   H     z / 7   j   S   <span style="color:#c8c4a8">A</span> G
  ( ^ 3 m +     4 W   <span style="color:#c8c4a8">K</span> &#x27;   U E p   (   1     @
$ &gt; m K A n   / 7 T     @   <span style="color:#c8c4a8">J</span> a =   M n j     h
/ A <u>_</u> P ( X   0 w ?     v     R u 6 = Q U     M
! ! i <span style="color:#c8c4a8">o</span> w &amp;   F &#x27; &lt;     B     Y <span style="color:#c8c4a8">$</span> ( 4 3 G     ;
b   +   J ;   , X ^ k   -     9   M A D p     + a
#   m   o W % , f 9 t   M     ;   &amp; <span style="color:#c8c4a8">x</span> O !     <u>_</u> G
O   h   f <u>_</u> N . O g c   3     `   w   ` .     t (
[   ^   D i V ; R D ?   a     [   0   D       . 0
\       C G s W y : L   &#x27;     x   h   /       1 4</pre></div></div><div class="rz" style="top:316px;width:454px"><i style="left:29px"></i><i style="right:29px"></i></div></div>
<div class="win" style="left:1551px;top:32px;width:251px;height:114px"><div class="tb"><div class="l"><svg width="10" height="10" viewBox="0 0 10 10"><rect x="0.5" y="0.5" width="9" height="9" fill="none" stroke="#404040"/><rect x="0" y="0" width="10" height="3" fill="#404040"/></svg></div><div class="t">gxmms2</div><div class="r"><svg width="10" height="10" viewBox="0 0 10 10"><path d="M0.8 0.8 L9.2 9.2 M9.2 0.8 L0.8 9.2" stroke="#484848" stroke-width="1.9" stroke-linecap="round"/></svg></div></div><div class="ct" style="left:0;width:251px;height:82px"><div class="abs" style="left:1px;top:0"><svg class="abs" style="left:13px;top:7.3px" width="8" height="12" viewBox="0 0 8 12"><path d="M0.5 0.5 L7 6 L0.5 11.5 Z" fill="#000"/></svg>
<div class="abs" style="left:33px;top:5.3px;width:130px;height:16px;overflow:hidden;white-space:nowrap;color:#eee;font-size:12px;line-height:16px">ronic ambient and space music</div>
<div class="abs" style="left:175px;top:5.3px;color:#eee;font-size:12px;line-height:16px">53:12</div>
<svg class="abs" style="left:224px;top:7.3px" width="12" height="12" viewBox="0 0 12 12"><path d="M0 4 H3 L7 0.5 V11.5 L3 8 H0 Z" fill="#000"/><path d="M8.5 3 Q11 6 8.5 9" stroke="#000" fill="none" stroke-width="1.2"/></svg>
<div class="abs" style="left:20px;top:32px;width:222px;height:2px;background:#171717;border-radius:1px"></div>
<div class="abs" style="left:9px;top:27px;width:13px;height:13px;border-radius:7px;background:#0e0e0e;border:1px solid #161616"></div>
<div class="abs" style="left:6.0px;top:47.6px;width:27px;height:27px;background:#141414;border:1px solid #1a1a1a;border-radius:3px"><svg class="abs" style="left:-1px;top:-1px" width="27" height="27" viewBox="0 0 27 27"><rect x="6.2" y="8.2" width="2.5" height="10.2" fill="#eeeeee"/><path d="M8.9 13.3 L14.7 8.2 V18.4 Z M15.2 13.3 L20.8 8.2 V18.4 Z" fill="#eeeeee"/></svg></div><div class="abs" style="left:36.1px;top:47.6px;width:27px;height:27px;background:#141414;border:1px solid #1a1a1a;border-radius:3px"><svg class="abs" style="left:-1px;top:-1px" width="27" height="27" viewBox="0 0 27 27"><path d="M8.1 6 L19.3 13.35 L8.1 20.7 Z" fill="#eeeeee"/></svg></div><div class="abs" style="left:66.2px;top:47.6px;width:27px;height:27px;background:#141414;border:1px solid #1a1a1a;border-radius:3px"><svg class="abs" style="left:-1px;top:-1px" width="27" height="27" viewBox="0 0 27 27"><rect x="7.9" y="8.2" width="3.5" height="10.2" fill="#eeeeee"/><rect x="15.1" y="8.2" width="3.5" height="10.2" fill="#eeeeee"/></svg></div><div class="abs" style="left:96.3px;top:47.6px;width:27px;height:27px;background:#141414;border:1px solid #1a1a1a;border-radius:3px"><svg class="abs" style="left:-1px;top:-1px" width="27" height="27" viewBox="0 0 27 27"><rect x="7.9" y="8.2" width="10.6" height="10.3" fill="#eeeeee"/></svg></div><div class="abs" style="left:126.4px;top:47.6px;width:27px;height:27px;background:#141414;border:1px solid #1a1a1a;border-radius:3px"><svg class="abs" style="left:-1px;top:-1px" width="27" height="27" viewBox="0 0 27 27"><path d="M6.5 8.2 L12.2 13.3 L6.5 18.4 Z M12.4 8.2 L18.1 13.3 L12.4 18.4 Z" fill="#eeeeee"/><rect x="18.4" y="8.2" width="2.4" height="10.2" fill="#eeeeee"/></svg></div><div class="abs" style="left:156.5px;top:47.6px;width:27px;height:27px;background:#141414;border:1px solid #1a1a1a;border-radius:3px"><svg class="abs" style="left:-1px;top:-1px" width="27" height="27" viewBox="0 0 27 27"><path d="M5.9 6.3 H20.5 V18.4 H18 L15.3 20.6 V18.4 H5.9 Z" fill="#3fa9f5"/><rect x="12.5" y="9.3" width="1.6" height="1.5" fill="#9fd2f8"/><rect x="12.5" y="11.6" width="1.6" height="4" fill="#9fd2f8"/></svg></div><div class="abs" style="left:186.6px;top:47.6px;width:27px;height:27px;background:#141414;border:1px solid #1a1a1a;border-radius:3px"><svg class="abs" style="left:-1px;top:-1px" width="27" height="27" viewBox="0 0 27 27"><path d="M7.5 6.1 H16.2 L19.3 9.2 V20.1 H7.5 Z" fill="#ecece6" stroke="#000" stroke-width="1.3" stroke-linejoin="round"/><path d="M16.2 6.1 V9.2 H19.3 Z" fill="#fff" stroke="#000" stroke-width="0.8"/><text x="8.4" y="11.8" font-family="Liberation Sans,sans-serif" font-size="5.6" font-weight="bold" fill="#6a6a6a">1</text><text x="8.4" y="17.2" font-family="Liberation Sans,sans-serif" font-size="5.6" font-weight="bold" fill="#6a6a6a">2</text><path d="M12 8.4 H15 M12 10.2 H15 M12 13.6 H13.6 M12 15.4 H13.6" stroke="#808080" stroke-width="0.8"/><ellipse cx="15.3" cy="18" rx="2.1" ry="1.6" fill="#000"/><path d="M16.9 18 V12.6 Q18.4 13 18.8 15.2" stroke="#000" stroke-width="1.2" fill="none"/></svg></div><div class="abs" style="left:216.7px;top:47.6px;width:27px;height:27px;background:#141414;border:1px solid #1a1a1a;border-radius:3px"><svg class="abs" style="left:-1px;top:-1px" width="27" height="27" viewBox="0 0 27 27"><circle cx="13.2" cy="13.3" r="7.3" fill="#c268d2"/><rect x="12.3" y="8.6" width="1.9" height="1.8" fill="#f0e0f4"/><rect x="12.3" y="11.6" width="1.9" height="6.2" fill="#f0e0f4"/></svg></div></div></div></div>
<div class="win" style="left:1804px;top:31px;width:442px;height:326px"><div class="tb"><div class="l"><svg width="10" height="10" viewBox="0 0 10 10"><rect x="0.5" y="0.5" width="9" height="9" fill="none" stroke="#404040"/><rect x="0" y="0" width="10" height="3" fill="#404040"/></svg></div><div class="t">menu://applications/</div><div class="r"><svg width="10" height="10" viewBox="0 0 10 10"><path d="M0.8 0.8 L9.2 9.2 M9.2 0.8 L0.8 9.2" stroke="#484848" stroke-width="1.9" stroke-linecap="round"/></svg></div></div><div class="ct" style="width:444px;height:294px"><div class="abs" style="left:1px;top:0;width:442px;height:294px"><div class="fm"><div class="x" style="left:8.6px;top:4.1px">File</div><div class="x" style="left:56.6px;top:4.1px">Edit</div><div class="x" style="left:104.6px;top:4.1px">View</div><div class="x" style="left:152.6px;top:4.1px">Bookmarks</div><div class="x" style="left:240.6px;top:4.1px">Go</div><div class="x" style="left:272.6px;top:4.1px">Tools</div><div class="x" style="left:328.6px;top:4.1px">Help</div><div class="abs" style="left:0;top:21px;width:122px;height:272px;background:#101010"></div><div class="x" style="left:7px;top:31.5px">Places</div><svg class="abs" style="left:104px;top:34px" width="9" height="8" viewBox="0 0 9 8"><path d="M0.5 0.5 H8.5 L4.5 7.5 Z" fill="#888" stroke="#bbb" stroke-width="0.6"/></svg><div class="abs" style="left:0;top:123px;width:122px;height:22px;background:linear-gradient(#006c9c,#005478)"></div><div class="abs" style="left:2.5px;top:57.5px;width:16px;height:16px;transform:scale(0.94);transform-origin:0 50%"><svg class="abs" style="left:0;top:0" width="16" height="16" viewBox="0 0 16 16"><path d="M1 8 L8 1.5 L15 8" stroke="#fff" stroke-width="1.8" fill="none"/><path d="M3.5 7.5 V14 H12.5 V7.5" stroke="#fff" stroke-width="1.8" fill="none"/><rect x="6.8" y="9.5" width="2.4" height="4.5" fill="#fff"/><rect x="11" y="2" width="1.8" height="3.5" fill="#fff"/></svg></div><div class="x" style="left:22px;top:58px">Home Folder</div><div class="abs" style="left:2.5px;top:80.5px;width:16px;height:16px;transform:scale(0.94);transform-origin:0 50%"><svg class="abs" style="left:0;top:0" width="16" height="16" viewBox="0 0 16 16"><rect x="1.2" y="1.5" width="13.6" height="10" fill="none" stroke="#fff" stroke-width="1.8"/><rect x="3" y="3.2" width="4" height="2.5" fill="#fff" opacity="0.6"/><rect x="5" y="12" width="6" height="1.5" fill="#fff"/><rect x="2.5" y="13.8" width="11" height="1.4" fill="#fff"/></svg></div><div class="x" style="left:22px;top:81px">Desktop</div><div class="abs" style="left:2.5px;top:103.5px;width:16px;height:16px;transform:scale(0.94);transform-origin:0 50%"><svg class="abs" style="left:0;top:0" width="16" height="16" viewBox="0 0 16 16"><rect x="2" y="2.2" width="12" height="2" fill="#f05050"/><rect x="5.5" y="0.8" width="5" height="2" fill="#f05050"/><path d="M3 5 H13 V15 H3 Z" fill="#f05050"/><rect x="5.6" y="6" width="1.6" height="8" fill="#111"/><rect x="8.8" y="6" width="1.6" height="8" fill="#111"/></svg></div><div class="x" style="left:22px;top:104px">Trash Can</div><div class="abs" style="left:2.5px;top:126.5px;width:16px;height:16px;transform:scale(0.94);transform-origin:0 50%"><svg class="abs" style="left:0;top:0" width="16" height="16" viewBox="0 0 16 16"><circle cx="8" cy="8" r="7.3" fill="#e8eef0"/><circle cx="8" cy="8" r="3.2" fill="#3fae5a"/><circle cx="8" cy="8" r="1.2" fill="#1d6b8a"/><path d="M10.5 9 L15 12 L10.5 15.5 Z" fill="#2ea84a"/></svg></div><div class="x" style="left:22px;top:127px">Applicatio…</div><div class="abs" style="left:2.5px;top:149.5px;width:16px;height:16px;transform:scale(0.94);transform-origin:0 50%"><svg class="abs" style="left:0;top:0" width="16" height="16" viewBox="0 0 16 16"><circle cx="8" cy="5" r="3.1" fill="none" stroke="#fff" stroke-width="1.7"/><rect x="1.5" y="10" width="13" height="1.8" fill="#fff"/><rect x="1.5" y="13.2" width="13" height="1.8" fill="#fff"/></svg></div><div class="x" style="left:22px;top:150px">Windows-SSD</div><div class="abs" style="left:2.5px;top:177.5px;width:16px;height:16px;transform:scale(0.94);transform-origin:0 50%"><svg class="abs" style="left:0;top:0" width="16" height="16" viewBox="0 0 16 16"><path d="M1.5 4 H6 L7.5 2.5 H14.5 V13.5 H1.5 Z" fill="#fff"/><rect x="6.5" y="4" width="4" height="1.6" fill="#111"/></svg></div><div class="x" style="left:22px;top:178px">daq2-Home</div><div class="abs" style="left:2.5px;top:200.5px;width:16px;height:16px;transform:scale(0.94);transform-origin:0 50%"><svg class="abs" style="left:0;top:0" width="16" height="16" viewBox="0 0 16 16"><path d="M1.5 4 H6 L7.5 2.5 H14.5 V13.5 H1.5 Z" fill="#fff"/><rect x="6.5" y="4" width="4" height="1.6" fill="#111"/></svg></div><div class="x" style="left:22px;top:201px">analysis@d…</div><div class="abs" style="left:2.5px;top:223.5px;width:16px;height:16px;transform:scale(0.94);transform-origin:0 50%"><svg class="abs" style="left:0;top:0" width="16" height="16" viewBox="0 0 16 16"><path d="M1.5 4 H6 L7.5 2.5 H14.5 V13.5 H1.5 Z" fill="#fff"/><rect x="6.5" y="4" width="4" height="1.6" fill="#111"/></svg></div><div class="x" style="left:22px;top:224px">madamewu-s…</div><div class="abs" style="left:2.5px;top:246.5px;width:16px;height:16px;transform:scale(0.94);transform-origin:0 50%"><svg class="abs" style="left:0;top:0" width="16" height="16" viewBox="0 0 16 16"><path d="M1.5 4 H6 L7.5 2.5 H14.5 V13.5 H1.5 Z" fill="#fff"/><rect x="6.5" y="4" width="4" height="1.6" fill="#111"/></svg></div><div class="x" style="left:22px;top:247px">minOS-s2s3…</div><div class="abs" style="left:0;top:171px;width:122px;height:1px;background:#1c1c1c"></div><div class="abs" style="left:129px;top:31.0px;width:24px;height:24px"><svg class="abs" style="left:0;top:0" width="24" height="24" viewBox="0 0 24 24"><rect x="1" y="2" width="22" height="19.5" rx="1.2" fill="#e8508c"/><path d="M23 5 V21.5 H4 Z" fill="#b55fc9"/><rect x="1" y="2" width="11" height="3.5" fill="#333"/><rect x="12" y="2" width="11" height="3.5" fill="#eee"/><rect x="20" y="2.6" width="2" height="2" fill="#e33"/><path d="M7 7.5 L15 7.5 L9 11.5 Z" fill="#f8b830"/><rect x="6" y="10.5" width="11" height="1.3" fill="#4aa8f0"/><circle cx="9" cy="11.1" r="1.5" fill="#fff"/><rect x="6" y="15.5" width="11" height="1.3" fill="#4aa8f0"/><circle cx="15" cy="16.1" r="1.5" fill="#fff"/></svg></div><div class="x" style="left:155px;top:35.0px">Preferences</div><div class="abs" style="left:264px;top:31.0px;width:24px;height:24px"><svg class="abs" style="left:0;top:0" width="24" height="24" viewBox="0 0 24 24"><ellipse cx="12" cy="6.2" rx="3.4" ry="5.6" fill="#8e5cd9" opacity="0.95" transform="rotate(0 12 12)"/><ellipse cx="12" cy="6.2" rx="3.4" ry="5.6" fill="#e8407c" opacity="0.95" transform="rotate(45 12 12)"/><ellipse cx="12" cy="6.2" rx="3.4" ry="5.6" fill="#f0483a" opacity="0.95" transform="rotate(90 12 12)"/><ellipse cx="12" cy="6.2" rx="3.4" ry="5.6" fill="#f58a1f" opacity="0.95" transform="rotate(135 12 12)"/><ellipse cx="12" cy="6.2" rx="3.4" ry="5.6" fill="#f8c020" opacity="0.95" transform="rotate(180 12 12)"/><ellipse cx="12" cy="6.2" rx="3.4" ry="5.6" fill="#6cc04a" opacity="0.95" transform="rotate(225 12 12)"/><ellipse cx="12" cy="6.2" rx="3.4" ry="5.6" fill="#30b8a0" opacity="0.95" transform="rotate(270 12 12)"/><ellipse cx="12" cy="6.2" rx="3.4" ry="5.6" fill="#3c8ee8" opacity="0.95" transform="rotate(315 12 12)"/><circle cx="12" cy="12" r="2.2" fill="#333"/></svg></div><div class="x" style="left:290px;top:35.0px">Graphics</div><div class="abs" style="left:129px;top:63.0px;width:24px;height:24px"><svg class="abs" style="left:0;top:0" width="24" height="24" viewBox="0 0 24 24"><path d="M3 3 Q1.5 8 5 9.5 L4 21 H8 L7.5 9.5 Q11 7.5 9.5 3 L8 6.5 H5 Z" fill="#7fa0b4"/><rect x="11" y="2.5" width="12" height="4.5" fill="#666"/><rect x="14" y="7" width="4" height="15" fill="#8d6a5a"/></svg></div><div class="x" style="left:155px;top:67.0px">Programming</div><div class="abs" style="left:264px;top:63.0px;width:24px;height:24px"><svg class="abs" style="left:0;top:0" width="24" height="24" viewBox="0 0 24 24"><path d="M5 5.5 Q12 3.5 19 5.5 Q22 7 23 16 Q23 20.5 20 19 L16.5 14.5 H7.5 L4 19 Q1 20.5 1 16 Q2 7 5 5.5 Z" fill="#5a5a5a"/><circle cx="7.5" cy="10" r="1.3" fill="#999"/><circle cx="16.5" cy="10" r="0.9" fill="#e8c040"/><circle cx="18" cy="8.6" r="0.8" fill="#e85050"/><circle cx="15" cy="8.6" r="0.8" fill="#50a0e8"/></svg></div><div class="x" style="left:290px;top:67.0px">Games</div><div class="abs" style="left:129px;top:95.0px;width:24px;height:24px"><svg class="abs" style="left:0;top:0" width="24" height="24" viewBox="0 0 24 24"><circle cx="12" cy="12" r="10.3" fill="#222" stroke="#e8e8e8" stroke-width="1.6"/><path d="M12 12 L9.2 3.2 A9.2 9.2 0 0 1 14.8 3.2 Z" fill="#e0e0e0" transform="rotate(0 12 12)"/><path d="M12 12 L9.2 3.2 A9.2 9.2 0 0 1 14.8 3.2 Z" fill="#e0e0e0" transform="rotate(60 12 12)"/><path d="M12 12 L9.2 3.2 A9.2 9.2 0 0 1 14.8 3.2 Z" fill="#e0e0e0" transform="rotate(120 12 12)"/><path d="M12 12 L9.2 3.2 A9.2 9.2 0 0 1 14.8 3.2 Z" fill="#e0e0e0" transform="rotate(180 12 12)"/><path d="M12 12 L9.2 3.2 A9.2 9.2 0 0 1 14.8 3.2 Z" fill="#e0e0e0" transform="rotate(240 12 12)"/><path d="M12 12 L9.2 3.2 A9.2 9.2 0 0 1 14.8 3.2 Z" fill="#e0e0e0" transform="rotate(300 12 12)"/><circle cx="12" cy="12" r="2.6" fill="#222" stroke="#ddd" stroke-width="1"/></svg></div><div class="x" style="left:155px;top:99.0px">Sound &amp; Video</div><div class="abs" style="left:264px;top:95.0px;width:24px;height:24px"><svg class="abs" style="left:0;top:0" width="24" height="24" viewBox="0 0 24 24"><path d="M9.5 1.5 H14.5 V3 H13.8 V9 L20.5 20 Q21 22 19 22 H5 Q3 22 3.5 20 L10.2 9 V3 H9.5 Z" fill="#eee"/><path d="M7.2 15 H16.8 L19.8 20 Q20 21 19 21 H5 Q4 21 4.2 20 Z" fill="#a040d0"/><path d="M3 9 Q7 9 8 14 Q4 14 3 9 Z M21 9 Q17 9 16 14 Q20 14 21 9 Z" fill="#6aa84a"/></svg></div><div class="x" style="left:290px;top:99.0px">Education</div><div class="abs" style="left:129px;top:127.0px;width:24px;height:24px"><svg class="abs" style="left:0;top:0" width="24" height="24" viewBox="0 0 24 24"><g fill="#9a9a9a"><rect x="9.6" y="0.8" width="4.8" height="6" rx="1" transform="rotate(0 12 12)"/><rect x="9.6" y="0.8" width="4.8" height="6" rx="1" transform="rotate(60 12 12)"/><rect x="9.6" y="0.8" width="4.8" height="6" rx="1" transform="rotate(120 12 12)"/><rect x="9.6" y="0.8" width="4.8" height="6" rx="1" transform="rotate(180 12 12)"/><rect x="9.6" y="0.8" width="4.8" height="6" rx="1" transform="rotate(240 12 12)"/><rect x="9.6" y="0.8" width="4.8" height="6" rx="1" transform="rotate(300 12 12)"/><circle cx="12" cy="12" r="8.4"/></g><circle cx="12" cy="12" r="4.8" fill="#b4b4b4"/></svg></div><div class="x" style="left:155px;top:131.0px">System Tools</div><div class="abs" style="left:264px;top:127.0px;width:24px;height:24px"><svg class="abs" style="left:0;top:0" width="24" height="24" viewBox="0 0 24 24"><path d="M1.5 1.5 L17 22 H1.5 Z M4.5 9.5 L11.5 19 H4.5 Z" fill="#8d6558" fill-rule="evenodd"/><path d="M12.2 1.5 L15 1.5 L16.6 15 L14.8 16.5 Z M21 1.5 L18.5 1.5 L15.2 15 L17 16.5 Z" fill="#ececec"/><circle cx="12.8" cy="19.3" r="2.7" fill="none" stroke="#30b8a8" stroke-width="1.5"/><circle cx="19.7" cy="19.3" r="2.7" fill="none" stroke="#30b8a8" stroke-width="1.5"/></svg></div><div class="x" style="left:290px;top:131.0px">Accessories</div><div class="abs" style="left:129px;top:159.0px;width:24px;height:24px"><svg class="abs" style="left:0;top:0" width="24" height="24" viewBox="0 0 24 24"><rect x="1" y="1" width="22" height="22" rx="1.2" fill="#cfcfcf"/><path d="M2.2 7.2 Q7 6 12 7.2 Q17 8.4 21.8 6.4 V21.8 H2.2 Z" fill="#e83878"/><path d="M12 1.5 V22.5 M1.5 12.5 H22.5" stroke="#f0f0f0" stroke-width="1"/></svg></div><div class="x" style="left:155px;top:163.0px">Wine</div><div class="abs" style="left:129px;top:191.0px;width:24px;height:24px"><svg class="abs" style="left:0;top:0" width="24" height="24" viewBox="0 0 24 24"><rect x="1" y="1" width="22" height="22" rx="1.8" fill="#6c8997"/><rect x="1" y="20" width="22" height="3" rx="1.2" fill="#5a7583"/><path d="M6.5 5.5 Q6.5 14 12 14 Q17.5 14 17.5 5.5" fill="none" stroke="#fff" stroke-width="1.3"/><circle cx="6.5" cy="5.3" r="1.1" fill="#fff"/><circle cx="17.5" cy="5.3" r="1.1" fill="#fff"/></svg></div><div class="x" style="left:155px;top:195.0px">Other</div><div class="abs" style="left:129px;top:223.0px;width:24px;height:24px"><svg class="abs" style="left:0;top:0" width="24" height="24" viewBox="0 0 24 24"><path d="M3 1.5 H16 L21 6.5 V22.5 H3 Z" fill="#f2f2f2"/><path d="M16 1.5 V6.5 H21 Z" fill="#cfcfcf"/><path d="M5.5 7 H15 M5.5 9.5 H17 M5.5 12 H15 M5.5 14.5 H12 M5.5 17 H11" stroke="#4a5ac8" stroke-width="1"/><path d="M5.5 12 H15 M5.5 17 H11" stroke="#333" stroke-width="1"/><rect x="14.5" y="11.5" width="5" height="3" fill="#9aa"/><rect x="12.5" y="14" width="9" height="8" rx="1" fill="#8fa0c0"/><rect x="12.5" y="17" width="9" height="5" rx="1" fill="#5868c8"/></svg></div><div class="x" style="left:155px;top:227.0px">Office</div><div class="abs" style="left:129px;top:255.0px;width:24px;height:24px"><svg class="abs" style="left:0;top:0" width="24" height="24" viewBox="0 0 24 24"><circle cx="12" cy="12" r="11" fill="#5a7ad8"/><path d="M4 5 Q8 1.5 12 3 L13.5 6 L10 8.5 L11 12 L7.5 14.5 L9 19 L6 20.5 Q1.5 16 1.5 11 Q2 7 4 5 Z" fill="#5cb85c"/><path d="M15 9 L20 7 Q23 10 22.5 15 L19 19.5 L16 17 L17.5 13 Z" fill="#5cb85c"/><path d="M14 2 L18 3.5 L16.5 5 Z" fill="#5cb85c"/></svg></div><div class="x" style="left:155px;top:259.0px">Internet</div></div></div></div><div class="rz" style="top:318px;width:442px"><i style="left:29px"></i><i style="right:29px"></i></div></div>
<div class="tile" style="left:0px;top:640px;background:#0c0c0c"><div class="abs" style="left:0;top:0;width:32px;height:32px"><svg class="abs" style="left:0;top:0" width="32" height="32" viewBox="0 0 32 32"><defs><pattern id="chk" width="2.6" height="2.6" patternUnits="userSpaceOnUse" patternTransform="rotate(45)"><rect width="2.6" height="2.6" fill="#0a0a18"/><rect width="1.4" height="1.4" fill="#3c6ce0"/></pattern></defs><rect x="0" y="0" width="32" height="32" fill="#050505"/><path d="M3.6 14.4 L13.4 20.9 V32 H3.6 Z" fill="#161616"/><path d="M5.2 15.5 V32 M8.1 17.4 V32 M10.7 19.2 V32" stroke="#b8c8b8" stroke-width="1.3"/><path d="M6.6 16.5 V32 M12.3 20.3 V32" stroke="#4a8a4a" stroke-width="0.7"/><path d="M5 13.2 L21.4 12.4 L27.2 16.6 L13.4 21.2 L5 14.6 Z" fill="#eef2ee"/><path d="M8 14.5 L12 14.2 M14 13.8 L19 13.4 M11 16.6 L13 16.3 M17 15.6 L22 15 M14 18.6 L19 17.4" stroke="#3c9a3c" stroke-width="0.9"/><path d="M13.5 16.2 L16 15.8" stroke="#e07830" stroke-width="1.2"/><path d="M13.6 21.2 L27.2 16.8 V31 L13.6 32 Z" fill="url(#chk)"/><path d="M27.5 29 L29.5 30 V32 H27.5 Z" fill="#b0a880"/></svg></div><div class="abs" style="left:0;top:0;width:32px;height:1.5px;background:#585858"></div><div class="abs" style="left:0;top:0;width:2px;height:32px;background:#585858"></div><div class="tl"><span>st</span></div></div>
<div class="tile" style="left:0px;top:672px;background:#0c0c0c"><div class="abs" style="left:0;top:0;width:32px;height:32px"><svg class="abs" style="left:0;top:0" width="32" height="32" viewBox="0 0 32 32"><rect width="32" height="32" fill="#0a0a0a"/><circle cx="16.5" cy="22.5" r="11.5" fill="#e4e8e8"/><path d="M5.5 20 Q9 13 18 12.5 L19.5 14.5 Q11 15.5 7.5 22 Z" fill="#5ab030"/><path d="M15 13 Q16 19 21 21 Q25 24 24 32 L20 32 Q21 25 17.5 23 Q13 19 14 13 Z" fill="#2a98d0"/><path d="M15 13 Q15.5 17 18 19.5 L16 21 Q13.5 17.5 14 13 Z" fill="#40a870"/></svg></div><div class="abs" style="left:0;top:0;width:32px;height:1.5px;background:#585858"></div><div class="abs" style="left:0;top:0;width:2px;height:32px;background:#585858"></div><div class="tl"><span style="left:-18.5px">Cisco...</span></div></div>
<div class="tile" style="left:0px;top:704px;background:#0c0c0c"><div class="abs" style="left:0;top:0;width:32px;height:32px"><svg class="abs" style="left:0;top:0" width="32" height="32" viewBox="0 0 32 32"><rect width="32" height="32" fill="#0a0a0a"/><path d="M2 3 L10 6 V32 H2 Z" fill="#6a3208"/><path d="M2 3 L4 4 V32 H2 Z" fill="#8a4a14"/><path d="M10 6 L32 3 V32 H10 Z" fill="#1c1c20"/><ellipse cx="25" cy="21.5" rx="9.5" ry="12" fill="#303034"/><ellipse cx="25" cy="22" rx="7.2" ry="9.4" fill="#b4a27a"/><ellipse cx="24.5" cy="22" rx="3.6" ry="4.8" fill="#5a4e3a"/><ellipse cx="24.8" cy="22" rx="1.5" ry="2.2" fill="#d0c8b8"/></svg></div><div class="abs" style="left:0;top:0;width:32px;height:1.5px;background:#585858"></div><div class="abs" style="left:0;top:0;width:2px;height:32px;background:#585858"></div></div>
<div class="tile" style="left:0px;top:736px;background:#0c0c0c"><div class="abs" style="left:0;top:0;width:32px;height:32px"><svg class="abs" style="left:0;top:0" width="32" height="32" viewBox="0 0 32 32"><rect width="32" height="32" fill="#0a0a0a"/><rect x="3.5" y="6" width="23" height="24" rx="1.5" fill="#f4f4f2"/><rect x="3.5" y="27.5" width="23" height="2.5" fill="#d8d8d4"/><rect x="6" y="3.5" width="16" height="5" rx="1" fill="#e8e8e8"/><path d="M7.5 3.5 V8 M10 3.5 V8 M12.5 3.5 V8 M15 3.5 V8 M17.5 3.5 V8 M20 3.5 V8" stroke="#888" stroke-width="1"/><path d="M6 12 H20 M6 15 H18 M6 18 H16 M6 21 H14 M6 24 H13" stroke="#bbb" stroke-width="1.2" stroke-dasharray="4 1"/><path d="M16 24.5 L26.5 10.5 L29.5 12.8 L19 26.5 L15.2 27.8 Z" fill="#f09020"/><path d="M26.5 10.5 L28 8.6 Q29.8 7.6 31 9.6 L29.5 12.8 Z" fill="#e03040"/><path d="M16 24.5 L19 26.5 L15.2 27.8 Z" fill="#e8d0a0"/><path d="M15.2 27.8 L16.2 26.2 L17 27.2 Z" fill="#222"/></svg></div><div class="abs" style="left:0;top:0;width:32px;height:1.5px;background:#585858"></div><div class="abs" style="left:0;top:0;width:2px;height:32px;background:#585858"></div></div>
<div class="tile" style="left:1366px;top:640px;background:#0c0c0c"><div class="abs" style="left:0;top:0;width:32px;height:32px"><svg class="abs" style="left:0;top:0" width="32" height="32" viewBox="0 0 32 32"><defs><pattern id="chk" width="2.6" height="2.6" patternUnits="userSpaceOnUse" patternTransform="rotate(45)"><rect width="2.6" height="2.6" fill="#0a0a18"/><rect width="1.4" height="1.4" fill="#3c6ce0"/></pattern></defs><rect x="0" y="0" width="32" height="32" fill="#050505"/><path d="M3.6 14.4 L13.4 20.9 V32 H3.6 Z" fill="#161616"/><path d="M5.2 15.5 V32 M8.1 17.4 V32 M10.7 19.2 V32" stroke="#b8c8b8" stroke-width="1.3"/><path d="M6.6 16.5 V32 M12.3 20.3 V32" stroke="#4a8a4a" stroke-width="0.7"/><path d="M5 13.2 L21.4 12.4 L27.2 16.6 L13.4 21.2 L5 14.6 Z" fill="#eef2ee"/><path d="M8 14.5 L12 14.2 M14 13.8 L19 13.4 M11 16.6 L13 16.3 M17 15.6 L22 15 M14 18.6 L19 17.4" stroke="#3c9a3c" stroke-width="0.9"/><path d="M13.5 16.2 L16 15.8" stroke="#e07830" stroke-width="1.2"/><path d="M13.6 21.2 L27.2 16.8 V31 L13.6 32 Z" fill="url(#chk)"/><path d="M27.5 29 L29.5 30 V32 H27.5 Z" fill="#b0a880"/></svg></div><div class="abs" style="left:0;top:0;width:32px;height:1.5px;background:#585858"></div><div class="abs" style="left:0;top:0;width:2px;height:32px;background:#585858"></div><div class="tl"><span>st</span></div></div>
<div class="tile" style="left:1366px;top:672px;background:#0c0c0c"><div class="abs" style="left:0;top:0;width:32px;height:32px"><svg class="abs" style="left:0;top:0" width="32" height="32" viewBox="0 0 32 32"><defs><pattern id="chk" width="2.6" height="2.6" patternUnits="userSpaceOnUse" patternTransform="rotate(45)"><rect width="2.6" height="2.6" fill="#0a0a18"/><rect width="1.4" height="1.4" fill="#3c6ce0"/></pattern></defs><rect x="0" y="0" width="32" height="32" fill="#050505"/><path d="M3.6 14.4 L13.4 20.9 V32 H3.6 Z" fill="#161616"/><path d="M5.2 15.5 V32 M8.1 17.4 V32 M10.7 19.2 V32" stroke="#b8c8b8" stroke-width="1.3"/><path d="M6.6 16.5 V32 M12.3 20.3 V32" stroke="#4a8a4a" stroke-width="0.7"/><path d="M5 13.2 L21.4 12.4 L27.2 16.6 L13.4 21.2 L5 14.6 Z" fill="#eef2ee"/><path d="M8 14.5 L12 14.2 M14 13.8 L19 13.4 M11 16.6 L13 16.3 M17 15.6 L22 15 M14 18.6 L19 17.4" stroke="#3c9a3c" stroke-width="0.9"/><path d="M13.5 16.2 L16 15.8" stroke="#e07830" stroke-width="1.2"/><path d="M13.6 21.2 L27.2 16.8 V31 L13.6 32 Z" fill="url(#chk)"/><path d="M27.5 29 L29.5 30 V32 H27.5 Z" fill="#b0a880"/></svg></div><div class="abs" style="left:0;top:0;width:32px;height:1.5px;background:#585858"></div><div class="abs" style="left:0;top:0;width:2px;height:32px;background:#585858"></div><div class="tl"><span>st</span></div></div>
<div class="tile" style="left:1366px;top:704px;background:#0c0c0c"><div class="abs" style="left:0;top:0;width:32px;height:32px"><svg class="abs" style="left:0;top:0" width="32" height="32" viewBox="0 0 32 32"><rect width="32" height="32" fill="#0a0a0a"/><path d="M3.5 3 H29 Q30.5 3 30.5 4.5 V9 H3.5 Z" fill="#f8b010"/><rect x="2" y="5.5" width="29.5" height="23.5" rx="1.8" fill="#fcc428"/><rect x="19" y="7.5" width="10.5" height="2" rx="0.6" fill="#fdf0d0"/></svg></div><div class="abs" style="left:0;top:0;width:32px;height:1.5px;background:#585858"></div><div class="abs" style="left:0;top:0;width:2px;height:32px;background:#585858"></div></div>
<div class="tile" style="left:1366px;top:736px;background:#111"><div class="abs" style="left:0;top:0;width:32px;height:32px"><svg class="abs" style="left:0;top:0" width="32" height="32" viewBox="0 0 32 32"><path d="M14.5 13 L21.5 11.5 V21.5 M14.5 13 V23" stroke="#000" stroke-width="1.6" fill="none"/><ellipse cx="12.8" cy="23.2" rx="2.3" ry="1.7" fill="#000"/><ellipse cx="19.8" cy="21.7" rx="2.3" ry="1.7" fill="#000"/><path d="M15.5 12.2 L17.5 11.8 M18.5 11.5 L20.5 11.1" stroke="#444" stroke-width="0.8"/></svg></div><div class="abs" style="left:0;top:0;width:32px;height:1.5px;background:#585858"></div><div class="abs" style="left:0;top:0;width:2px;height:32px;background:#585858"></div></div>
<div class="abs" style="left:1308px;top:704px;width:48px;height:48px;background:#2a2a2a"></div><div class="abs" style="left:1313px;top:709px;width:15px;height:15px"><svg class="abs" style="left:0;top:0" width="15" height="15" viewBox="0 0 15 15"><circle cx="7" cy="7.3" r="6.8" fill="#dde1e4"/><path d="M0.5 6.5 Q1.5 1.5 7 0.6 Q10 0.8 11.5 2.4 Q7.5 1.8 5 4.5 Q3.2 6.8 3.4 9.5 L1.5 10.5 Q0.4 8.5 0.5 6.5 Z" fill="#3a9a3a"/><path d="M4 5 Q6 3 8 3.4 L7 6 Z" fill="#2a7a3a"/><path d="M8.3 9 V6.2 Q10.6 3.2 12.9 6.2 V9" stroke="#c8ccd0" stroke-width="1.4" fill="none"/><rect x="10" y="5" width="1.2" height="3" fill="#2858c8"/><rect x="7.3" y="8.8" width="6.9" height="5.6" fill="#f8a820"/><rect x="7.3" y="8.8" width="2.3" height="5.6" fill="#fce8b0"/></svg></div><div class="abs" style="left:1304px;top:753px;width:56px;height:9px"><svg class="abs" style="left:0;top:0" width="56" height="9" viewBox="0 0 56 9"><rect x="0.5" y="0.5" width="13" height="8" fill="#b4b4b4" stroke="#e4e4e4"/><rect x="42.5" y="0.5" width="13" height="8" fill="#b4b4b4" stroke="#e4e4e4"/><rect x="14" y="3" width="28" height="3.5" fill="#e4e4e4"/><path d="M3 4.5 L6.5 2 V3.6 H11 V5.4 H6.5 V7 Z" fill="#6e6e6e"/><path d="M53 4.5 L49.5 2 V3.6 H45 V5.4 H49.5 V7 Z" fill="#6e6e6e"/><text x="28" y="8" text-anchor="middle" font-family="Liberation Sans,sans-serif" font-size="8" font-weight="bold" fill="#8a8a8a">1/4</text><path d="M0 8.7 H14 M42 8.7 H56" stroke="#f4f4f4" stroke-width="0.8"/></svg></div>
<div class="abs" style="left:2674px;top:704px;width:48px;height:48px;background:#2a2a2a"></div><div class="abs" style="left:2679px;top:709px;width:15px;height:15px"><svg class="abs" style="left:0;top:0" width="15" height="15" viewBox="0 0 15 15"><circle cx="7" cy="7.3" r="6.8" fill="#dde1e4"/><path d="M0.5 6.5 Q1.5 1.5 7 0.6 Q10 0.8 11.5 2.4 Q7.5 1.8 5 4.5 Q3.2 6.8 3.4 9.5 L1.5 10.5 Q0.4 8.5 0.5 6.5 Z" fill="#3a9a3a"/><path d="M4 5 Q6 3 8 3.4 L7 6 Z" fill="#2a7a3a"/><path d="M8.3 9 V6.2 Q10.6 3.2 12.9 6.2 V9" stroke="#c8ccd0" stroke-width="1.4" fill="none"/><rect x="10" y="5" width="1.2" height="3" fill="#2858c8"/><rect x="7.3" y="8.8" width="6.9" height="5.6" fill="#f8a820"/><rect x="7.3" y="8.8" width="2.3" height="5.6" fill="#fce8b0"/></svg></div><div class="abs" style="left:2698px;top:704px;width:24px;height:24px;background:#111"><svg class="abs" style="left:0;top:0" width="24" height="24" viewBox="0 0 24 24"><path d="M9 8.5 L16.5 7 V15.5 M9 8.5 V17" stroke="#000" stroke-width="1.6" fill="none"/><ellipse cx="7.4" cy="17.2" rx="2.2" ry="1.6" fill="#000"/><ellipse cx="14.9" cy="15.7" rx="2.2" ry="1.6" fill="#000"/><path d="M10 7.6 L12 7.2 M13 7 L15 6.6" stroke="#444" stroke-width="0.8"/></svg></div><div class="abs" style="left:2670px;top:753px;width:56px;height:9px"><svg class="abs" style="left:0;top:0" width="56" height="9" viewBox="0 0 56 9"><rect x="0.5" y="0.5" width="13" height="8" fill="#b4b4b4" stroke="#e4e4e4"/><rect x="42.5" y="0.5" width="13" height="8" fill="#b4b4b4" stroke="#e4e4e4"/><rect x="14" y="3" width="28" height="3.5" fill="#e4e4e4"/><path d="M3 4.5 L6.5 2 V3.6 H11 V5.4 H6.5 V7 Z" fill="#6e6e6e"/><path d="M53 4.5 L49.5 2 V3.6 H45 V5.4 H49.5 V7 Z" fill="#6e6e6e"/><text x="28" y="8" text-anchor="middle" font-family="Liberation Sans,sans-serif" font-size="8" font-weight="bold" fill="#8a8a8a">1/4</text><path d="M0 8.7 H14 M42 8.7 H56" stroke="#f4f4f4" stroke-width="0.8"/></svg></div>
</body></html>
